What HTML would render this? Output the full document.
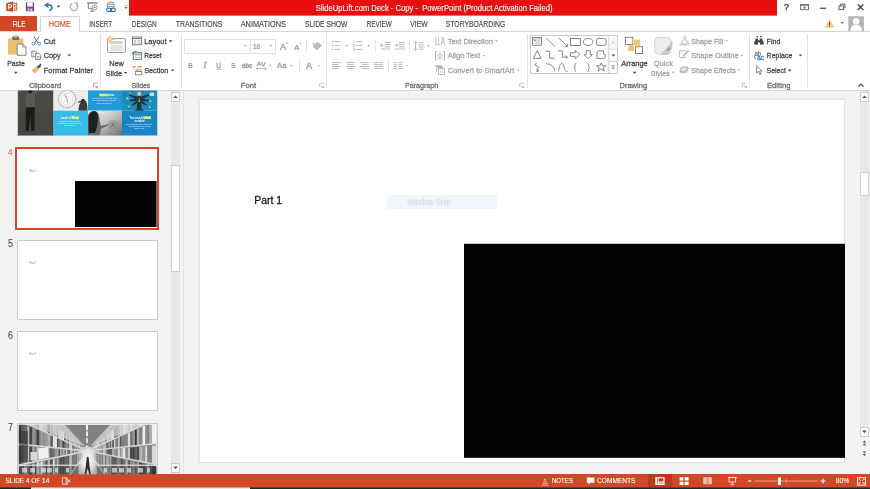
<!DOCTYPE html>
<html lang="en">
<head>
<meta charset="utf-8">
<title>SlideUpLift.com Deck - Copy - PowerPoint</title>
<style>
*{box-sizing:border-box;margin:0;padding:0}
html,body{width:870px;height:489px;overflow:hidden;background:#fff;font-family:"Liberation Sans",sans-serif}
body{position:relative}
.a{position:absolute}
#ov{position:absolute;left:0;top:0;width:870px;height:489px;z-index:5;will-change:transform}
#titlebar{left:129px;top:0;width:648px;height:16px;background:linear-gradient(#e80f0f 0,#e80f0f 15px,#f06a6a 15px,#f06a6a 16px)}
#file{left:0;top:16px;width:37px;height:15px;background:#d24726}
#hometab{left:40px;top:16px;width:40px;height:16px;background:#fff;border:1px solid #d4d4d4;border-bottom:none;z-index:2}
#ribbontop{left:0;top:31px;width:870px;height:1px;background:#d4d4d4}
#ribbonbot{left:0;top:90px;width:870px;height:1px;background:#dadada}
.sep{position:absolute;top:34px;width:1px;height:54px;background:#e2e2e2}
.ssep{position:absolute;width:1px;height:14px;background:#e2e2e2}
#left{left:0;top:91px;width:183px;height:383px;background:#f3f3f3;overflow:hidden}
#divider{left:183px;top:91px;width:1px;height:383px;background:#e4e4e4}
#main{left:184px;top:91px;width:686px;height:383px;background:#f3f3f3}
#slide{left:198px;top:98px;width:647px;height:365px;background:#fff;border:1px solid #e4e4e4;border-left:2px solid #e9e9e9;border-top:2px solid #e9e9e9}
#black{left:464px;top:243px;width:381px;height:215px;background:linear-gradient(#c4c4c4 0,#c4c4c4 1px,#030303 1px,#030303 214px,#2c2c2c 214px)}
#snip{left:387px;top:195px;width:110px;height:14px;background:#f1f5fd}
#status{left:0;top:474px;width:870px;height:13px;background:#d24726}
#viewsel{left:648px;top:474px;width:24px;height:13px;background:#b83b1d}
.tb{position:absolute;left:0;top:487px;height:2px}
.thumb{position:absolute;left:17px;width:141px;height:80px;background:#fff;border:1px solid #cbcbcb}
#t4{left:15px;top:56px;width:144px;height:83px;border:2px solid #d24726;background:#fff;position:absolute}
#t4b{left:75px;top:90px;width:82px;height:46px;background:linear-gradient(to right,#030303 81px,#6a6a6a 81px)}
.sbtrack{position:absolute;background:#e9e9e9}
.sbbtn{position:absolute;background:#fff;border:1px solid #cdcdcd}
.fbox{position:absolute;top:39px;height:15px;border:1px solid #e1e1e1;background:#fff}
#gallery{left:530px;top:35px;width:88px;height:39px;border:1px solid #c8c8c8;background:#fff}

</style>
</head>
<body>
<!-- title bar -->
<div class="a" id="titlebar"></div>
<!-- ribbon tabs -->
<div class="a" id="ribbontop"></div>
<div class="a" id="file"></div>
<div class="a" id="hometab"></div>
<!-- ribbon body -->
<div class="sep" style="left:100px"></div>
<div class="sep" style="left:181px"></div>
<div class="sep" style="left:326px"></div>
<div class="sep" style="left:527px"></div>
<div class="sep" style="left:749px"></div>
<div class="sep" style="left:807px"></div>
<div class="ssep" style="left:306px;top:39px"></div>
<div class="ssep" style="left:299px;top:59px"></div>
<div class="ssep" style="left:375px;top:39px"></div>
<div class="ssep" style="left:409px;top:39px"></div>
<div class="ssep" style="left:388px;top:59px"></div>
<div class="fbox" style="left:184px;width:67px"></div>
<div class="fbox" style="left:250px;width:26px"></div>
<div class="a" id="gallery"></div>
<div class="a" id="ribbonbot"></div>
<!-- left thumbnail pane -->
<div class="a" id="left">
<div class="thumb" id="t3" style="top:-35px;height:80px"></div>
<div id="t4"></div>
<div class="a" id="t4b"></div>
<div class="thumb" style="top:149px"></div>
<div class="thumb" style="top:240px"></div>
<div class="thumb" id="t7" style="top:332px;height:60px"></div>
<div class="sbtrack" style="left:171px;top:0;width:9px;height:383px"></div>
<div class="sbbtn" style="left:171px;top:1px;width:9px;height:10px"></div>
<div class="sbbtn" style="left:171px;top:74px;width:9px;height:107px"></div>
<div class="sbbtn" style="left:171px;top:372px;width:9px;height:10px"></div>
</div>
<div class="a" id="divider"></div>
<!-- editing area -->
<div class="a" id="main"></div>
<div class="a" id="slide"></div>
<div class="a" id="snip"></div>
<div class="a" id="black"></div>
<div class="sbtrack" style="left:860px;top:91px;width:9px;height:383px"></div>
<div class="sbbtn" style="left:860px;top:92px;width:9px;height:10px"></div>
<div class="sbbtn" style="left:860px;top:172px;width:9px;height:24px"></div>
<div class="sbbtn" style="left:860px;top:427px;width:9px;height:10px"></div>
<div class="sbtrack" style="left:860px;top:437px;width:10px;height:37px;background:#f3f3f3"></div>
<!-- status bar -->
<div class="a" id="status"></div>
<div class="a" id="viewsel"></div>
<div class="tb" style="left:0;width:31px;background:linear-gradient(#703928 0,#703928 1px,#0f2b2b 1px)"></div>
<div class="tb" style="left:31px;width:219px;background:linear-gradient(#db9b8b 0,#db9b8b 1px,#e4eef0 1px)"></div>
<div class="tb" style="left:250px;width:620px;background:linear-gradient(#703928 0,#703928 1px,#123032 1px)"></div>

<svg id="ov" width="870" height="489" viewBox="0 0 870 489" font-family='"Liberation Sans", sans-serif'>

<defs>
<clipPath id="t7clip"><rect x="18.600" y="424.800" width="137.900" height="49.400"/></clipPath>
<clipPath id="paneclip"><rect x="0" y="90.600" width="183" height="383.600"/></clipPath>
<linearGradient id="gw" x1="0" y1="0" x2="1" y2="1">
<stop offset="0" stop-color="#f2f2f2"/><stop offset="0.450" stop-color="#c9c9c9"/><stop offset="1" stop-color="#6f6f6f"/>
</linearGradient>
<linearGradient id="gl" x1="0" y1="0" x2="1" y2="0">
<stop offset="0" stop-color="#4e4e4e"/><stop offset="0.200" stop-color="#7a7a7a"/><stop offset="0.600" stop-color="#a2a2a2"/><stop offset="1" stop-color="#c4c4c4"/>
</linearGradient>
<linearGradient id="gr" x1="1" y1="0" x2="0" y2="0">
<stop offset="0" stop-color="#7c7c7c"/><stop offset="0.300" stop-color="#8e8e8e"/><stop offset="0.700" stop-color="#a8a8a8"/><stop offset="1" stop-color="#c8c8c8"/>
</linearGradient>
<radialGradient id="gc" cx="0.500" cy="0.450" r="0.600">
<stop offset="0" stop-color="#fafafa"/><stop offset="0.600" stop-color="#e2e2e2"/><stop offset="1" stop-color="#b0b0b0"/>
</radialGradient>
<pattern id="books" width="3.400" height="10" patternUnits="userSpaceOnUse">
<rect width="1.200" height="10" fill="#000" opacity="0.280"/><rect x="2" width="0.700" height="10" fill="#fff" opacity="0.300"/>
</pattern>
</defs>
<g id="thumb3" clip-path="url(#paneclip)">
<!-- column 1: man at chalkboard -->
<rect x="18.100" y="57" width="35.400" height="78.300" fill="#4a4946"/>
<rect x="18.100" y="112" width="35.400" height="23.300" fill="#46453f" opacity="0.600"/>
<path d="M25.600 96c0.600-2.200 2-3.400 4-3.600l3.600-0.200 4.400-2.400 0.800 1.200-3.600 3.400 0.200 13.200h-8.800z" fill="#595957"/>
<circle cx="30.400" cy="91.600" r="1.900" fill="#23211f"/>
<path d="M25.800 107.200h9l-0.400 23.800h-3.200l-1-18-1.400 18h-3.200z" fill="#1b1a19"/>
<!-- column 2 top: clock sketch -->
<rect x="53.500" y="57" width="34.500" height="53.700" fill="#ececec"/>
<circle cx="67.100" cy="99" r="8.600" fill="#f6f6f6" stroke="#9a9a9a" stroke-width="1.100" stroke-dasharray="1.400 0.900"/>
<circle cx="67.100" cy="99" r="6" fill="none" stroke="#c4c4c4" stroke-width="0.500"/>
<path d="M67.100 99l-2.400-4.600M67.100 99l0.400 4" stroke="#6a6a6a" stroke-width="0.600"/>
<path d="M78.600 110.700c0-5 1-8 3-8.600l-3.400 0.600-0.200-1 4-1.400c0.600-1.400 2.600-1.400 3 0.200 2 1.200 2.400 5 2.600 10.200z" fill="#3a3a3a"/>
<circle cx="82.800" cy="100.200" r="1.400" fill="#2a2a2a"/>
<!-- column 2 bottom: cyan -->
<rect x="53.500" y="110.700" width="34.500" height="24.600" fill="#38bce9"/>
<rect x="71.600" y="116.100" width="7.400" height="2.700" fill="#a5dc2c"/>
<!-- column 3 top: blue -->
<rect x="88" y="57" width="34" height="53.700" fill="#1f9bdb"/>
<rect x="99.300" y="93.700" width="9" height="2.700" fill="#a5dc2c"/>
<rect x="108.300" y="95" width="6.200" height="1.300" fill="#57c43a"/>
<!-- column 3 bottom: woman photo -->
<rect x="88" y="110.700" width="34" height="24.600" fill="url(#gw)"/>
<circle cx="112.600" cy="124.600" r="4" fill="none" stroke="#6a6a6a" stroke-width="0.600" opacity="0.700"/>
<circle cx="112.600" cy="124.600" r="2.200" fill="none" stroke="#555" stroke-width="0.600" opacity="0.800"/>
<circle cx="112.600" cy="124.600" r="0.800" fill="#444"/>
<path d="M88 135.300v-20c1.400-3.600 4.400-5 7.200-4.200 3.400 1 4.200 5 4.600 9.400l1 5.400 6.800-1.600 0.400 1.200-7 3.400-1.200 6.400z" fill="#6b6b6b"/>
<path d="M88.600 133v-16.600c1.200-4 4-5.800 6.600-5 3 1 3.200 5 2.600 10-0.400 4.400-1.400 8.600-3 11.600z" fill="#1e1e1e"/>
<!-- column 4 top: teal illustration -->
<rect x="122" y="57" width="35" height="53.700" fill="#1f8cb4"/>
<path d="M136.600 96.400l2.600-0.800 2.600 0.800 7-2.400 0.600 1.400-6.200 3.400 5.600 1.200-0.200 1.400-6.200-0.400 4.600 3.800-1 1-5-2.800 0.800 6.200 3 1.500h-11.200l3-1.500 0.800-6.200-5 2.800-1-1 4.600-3.800-6.200 0.400-0.200-1.400 5.600-1.200-6.200-3.400 0.600-1.400z" fill="#1c3442"/>
<circle cx="139.200" cy="93.800" r="2.100" fill="#d9c3b0"/>
<path d="M139.200 96.400l-0.700 4.800 0.700 1 0.700-1z" fill="#e8a92e"/>
<rect x="149.600" y="92.800" width="4.400" height="3.200" rx="0.400" fill="#cfeaf5" opacity="0.900"/>
<g fill="#cfeaf5" opacity="0.750"><circle cx="127.400" cy="98.400" r="1.100"/><circle cx="129" cy="106.400" r="1"/><circle cx="150.400" cy="101.200" r="1"/><circle cx="149.600" cy="107" r="1"/><circle cx="130.400" cy="93.200" r="0.800"/></g>
<!-- column 4 bottom: blue -->
<rect x="122" y="110.700" width="35" height="24.600" fill="#1a85c5"/>
<rect x="143.200" y="116.100" width="7.800" height="2.700" fill="#a5dc2c"/>
</g>

<g id="thumb7" clip-path="url(#t7clip)">
<rect x="18.6" y="424.8" width="137.9" height="50.2" fill="#8a8a8a"/>
<path d="M18.6 424.8H156.5L92.6 447.0H82.6z" fill="#919191"/>
<path d="M64 424.8h47l-19 22h-8.800z" fill="#818181"/>
<rect x="86.00" y="424.8" width="2.0" height="5.4" fill="#f6f6f6"/>
<rect x="86.15" y="431.4" width="1.7" height="5" fill="#f6f6f6"/>
<rect x="86.25" y="437.8" width="1.5" height="5.4" fill="#f6f6f6"/>
<rect x="85.50" y="445.6" width="3.0" height="1.2" fill="#f6f6f6"/>
<path d="M82.6 447.0h10l4 9v19h-18v-19z" fill="url(#gc)"/>
<path d="M18.60 396.00L21.54 398.35V421.32L18.60 420.00z" fill="#232323"/>
<path d="M21.54 398.35L23.89 400.22V422.38L21.54 421.32z" fill="#727272"/>
<path d="M23.89 400.22L27.45 403.06V423.98L23.89 422.38z" fill="#8a8a8a"/>
<path d="M27.45 403.06L29.39 404.60V424.85L27.45 423.98z" fill="#8d8d8d"/>
<path d="M29.39 404.60L32.38 406.98V426.19L29.39 424.85z" fill="#dadada"/>
<path d="M32.38 406.98L34.83 408.94V427.29L32.38 426.19z" fill="#bababa"/>
<path d="M34.83 408.94L36.50 410.27V428.04L34.83 427.29z" fill="#939393"/>
<path d="M36.50 410.27L39.06 412.31V429.19L36.50 428.04z" fill="#787878"/>
<path d="M39.06 412.31L40.55 413.50V429.86L39.06 429.19z" fill="#dbdbdb"/>
<path d="M40.55 413.50L42.77 415.27V430.86L40.55 429.86z" fill="#e1e1e1"/>
<path d="M42.77 415.27L44.21 416.41V431.51L42.77 430.86z" fill="#b1b1b1"/>
<path d="M44.21 416.41L45.64 417.55V432.15L44.21 431.51z" fill="#d2d2d2"/>
<path d="M45.64 417.55L47.60 419.12V433.03L45.64 432.15z" fill="#9d9d9d"/>
<path d="M47.60 419.12L50.12 421.13V434.16L47.60 433.03z" fill="#3c3c3c"/>
<path d="M50.12 421.13L51.41 422.15V434.74L50.12 434.16z" fill="#ababab"/>
<path d="M51.41 422.15L52.80 423.26V435.37L51.41 434.74z" fill="#7a7a7a"/>
<path d="M52.80 423.26L54.72 424.79V436.23L52.80 435.37z" fill="#b4b4b4"/>
<path d="M54.72 424.79L56.95 426.56V437.23L54.72 436.23z" fill="#afafaf"/>
<path d="M56.95 426.56L58.57 427.86V437.96L56.95 437.23z" fill="#818181"/>
<path d="M58.57 427.86L59.90 428.92V438.55L58.57 437.96z" fill="#d5d5d5"/>
<path d="M59.90 428.92L61.80 430.44V439.41L59.90 438.55z" fill="#d6d6d6"/>
<path d="M61.80 430.44L62.61 431.08V439.77L61.80 439.41z" fill="#d4d4d4"/>
<path d="M62.61 431.08L64.21 432.36V440.49L62.61 439.77z" fill="#efefef"/>
<path d="M64.21 432.36L65.18 433.13V440.93L64.21 440.49z" fill="#4a4a4a"/>
<path d="M65.18 433.13L65.96 433.75V441.28L65.18 440.93z" fill="#5b5b5b"/>
<path d="M65.96 433.75L66.70 434.34V441.61L65.96 441.28z" fill="#d8d8d8"/>
<path d="M66.70 434.34L67.58 435.04V442.01L66.70 441.61z" fill="#a4a4a4"/>
<path d="M67.58 435.04L68.83 436.04V442.57L67.58 442.01z" fill="#616161"/>
<path d="M68.83 436.04L69.52 436.59V442.88L68.83 442.57z" fill="#e5e5e5"/>
<path d="M69.52 436.59L70.48 437.36V443.31L69.52 442.88z" fill="#e0e0e0"/>
<path d="M70.48 437.36L71.43 438.11V443.74L70.48 443.31z" fill="#a0a0a0"/>
<path d="M71.43 438.11L72.16 438.69V444.06L71.43 443.74z" fill="#cecece"/>
<path d="M72.16 438.69L72.96 439.33V444.42L72.16 444.06z" fill="#a9a9a9"/>
<path d="M72.96 439.33L73.42 439.70V444.63L72.96 444.42z" fill="#e2e2e2"/>
<path d="M73.42 439.70L73.87 440.06V444.83L73.42 444.63z" fill="#d4d4d4"/>
<path d="M73.87 440.06L74.39 440.47V445.06L73.87 444.83z" fill="#d8d8d8"/>
<path d="M74.39 440.47L75.14 441.07V445.40L74.39 445.06z" fill="#a8a8a8"/>
<path d="M75.14 441.07L75.73 441.54V445.67L75.14 445.40z" fill="#e0e0e0"/>
<path d="M75.73 441.54L76.23 441.94V445.89L75.73 445.67z" fill="#e3e3e3"/>
<path d="M76.23 441.94L76.84 442.42V446.16L76.23 445.89z" fill="#a9a9a9"/>
<path d="M76.84 442.42L77.35 442.83V446.40L76.84 446.16z" fill="#a9a9a9"/>
<path d="M77.35 442.83L77.78 443.17V446.59L77.35 446.40z" fill="#d9d9d9"/>
<path d="M77.78 443.17L78.39 443.66V446.86L77.78 446.59z" fill="#7f7f7f"/>
<path d="M78.39 443.66L78.92 444.08V447.10L78.39 446.86z" fill="#d6d6d6"/>
<path d="M78.92 444.08L79.26 444.35V447.25L78.92 447.10z" fill="#b1b1b1"/>
<path d="M79.26 444.35L79.70 444.70V447.45L79.26 447.25z" fill="#d9d9d9"/>
<path d="M79.70 444.70L80.10 445.03V447.63L79.70 447.45z" fill="#c3c3c3"/>
<path d="M80.10 445.03L80.59 445.41V447.85L80.10 447.63z" fill="#8f8f8f"/>
<path d="M80.59 445.41L81.01 445.74V448.04L80.59 447.85z" fill="#9f9f9f"/>
<path d="M81.01 445.74L81.28 445.96V448.16L81.01 448.04z" fill="#d7d7d7"/>
<path d="M81.28 445.96L81.71 446.31V448.36L81.28 448.16z" fill="#acacac"/>
<path d="M81.71 446.31L81.91 446.47V448.45L81.71 448.36z" fill="#d5d5d5"/>
<path d="M81.91 446.47L82.18 446.68V448.56L81.91 448.45z" fill="#e3e3e3"/>
<path d="M82.18 446.68L82.50 446.94V448.71L82.18 448.56z" fill="#d1d1d1"/>
<path d="M82.50 446.94L82.69 447.08V448.79L82.50 448.71z" fill="#dedede"/>
<path d="M18.60 421.50L21.54 422.76V444.30L18.60 444.00z" fill="#383838"/>
<path d="M21.54 422.76L23.89 423.76V444.54L21.54 444.30z" fill="#5d5d5d"/>
<path d="M23.89 423.76L27.45 425.29V444.90L23.89 444.54z" fill="#656565"/>
<path d="M27.45 425.29L29.39 426.11V445.09L27.45 444.90z" fill="#c0c0c0"/>
<path d="M29.39 426.11L32.38 427.39V445.40L29.39 445.09z" fill="#424242"/>
<path d="M32.38 427.39L34.83 428.44V445.65L32.38 445.40z" fill="#939393"/>
<path d="M34.83 428.44L36.50 429.15V445.82L34.83 445.65z" fill="#818181"/>
<path d="M36.50 429.15L39.06 430.25V446.08L36.50 445.82z" fill="#414141"/>
<path d="M39.06 430.25L40.55 430.89V446.23L39.06 446.08z" fill="#7b7b7b"/>
<path d="M40.55 430.89L42.77 431.83V446.45L40.55 446.23z" fill="#a0a0a0"/>
<path d="M42.77 431.83L44.21 432.45V446.60L42.77 446.45z" fill="#919191"/>
<path d="M44.21 432.45L45.64 433.06V446.74L44.21 446.60z" fill="#9a9a9a"/>
<path d="M45.64 433.06L47.60 433.90V446.94L45.64 446.74z" fill="#9d9d9d"/>
<path d="M47.60 433.90L50.12 434.98V447.20L47.60 446.94z" fill="#b2b2b2"/>
<path d="M50.12 434.98L51.41 435.53V447.33L50.12 447.20z" fill="#7c7c7c"/>
<path d="M51.41 435.53L52.80 436.12V447.47L51.41 447.33z" fill="#3b3b3b"/>
<path d="M52.80 436.12L54.72 436.94V447.66L52.80 447.47z" fill="#e9e9e9"/>
<path d="M54.72 436.94L56.95 437.89V447.89L54.72 447.66z" fill="#ebebeb"/>
<path d="M56.95 437.89L58.57 438.59V448.05L56.95 447.89z" fill="#545454"/>
<path d="M58.57 438.59L59.90 439.16V448.19L58.57 448.05z" fill="#7b7b7b"/>
<path d="M59.90 439.16L61.80 439.97V448.38L59.90 448.19z" fill="#9c9c9c"/>
<path d="M61.80 439.97L62.61 440.31V448.46L61.80 448.38z" fill="#777777"/>
<path d="M62.61 440.31L64.21 441.00V448.63L62.61 448.46z" fill="#4a4a4a"/>
<path d="M64.21 441.00L65.18 441.41V448.73L64.21 448.63z" fill="#696969"/>
<path d="M65.18 441.41L65.96 441.75V448.81L65.18 448.73z" fill="#6a6a6a"/>
<path d="M65.96 441.75L66.70 442.07V448.88L65.96 448.81z" fill="#606060"/>
<path d="M66.70 442.07L67.58 442.44V448.97L66.70 448.88z" fill="#ececec"/>
<path d="M67.58 442.44L68.83 442.98V449.10L67.58 448.97z" fill="#545454"/>
<path d="M68.83 442.98L69.52 443.27V449.17L68.83 449.10z" fill="#f0f0f0"/>
<path d="M69.52 443.27L70.48 443.68V449.26L69.52 449.17z" fill="#d7d7d7"/>
<path d="M70.48 443.68L71.43 444.09V449.36L70.48 449.26z" fill="#f1f1f1"/>
<path d="M71.43 444.09L72.16 444.40V449.43L71.43 449.36z" fill="#eeeeee"/>
<path d="M72.16 444.40L72.96 444.74V449.51L72.16 449.43z" fill="#7b7b7b"/>
<path d="M72.96 444.74L73.42 444.94V449.56L72.96 449.51z" fill="#999999"/>
<path d="M73.42 444.94L73.87 445.13V449.61L73.42 449.56z" fill="#666666"/>
<path d="M73.87 445.13L74.39 445.35V449.66L73.87 449.61z" fill="#5d5d5d"/>
<path d="M74.39 445.35L75.14 445.67V449.74L74.39 449.66z" fill="#999999"/>
<path d="M75.14 445.67L75.73 445.92V449.80L75.14 449.74z" fill="#9a9a9a"/>
<path d="M75.73 445.92L76.23 446.14V449.85L75.73 449.80z" fill="#ebebeb"/>
<path d="M76.23 446.14L76.84 446.40V449.91L76.23 449.85z" fill="#727272"/>
<path d="M76.84 446.40L77.35 446.62V449.96L76.84 449.91z" fill="#909090"/>
<path d="M77.35 446.62L77.78 446.80V450.00L77.35 449.96z" fill="#b3b3b3"/>
<path d="M77.78 446.80L78.39 447.06V450.07L77.78 450.00z" fill="#b6b6b6"/>
<path d="M78.39 447.06L78.92 447.29V450.12L78.39 450.07z" fill="#ababab"/>
<path d="M78.92 447.29L79.26 447.43V450.15L78.92 450.12z" fill="#c4c4c4"/>
<path d="M79.26 447.43L79.70 447.62V450.20L79.26 450.15z" fill="#838383"/>
<path d="M79.70 447.62L80.10 447.80V450.24L79.70 450.20z" fill="#888888"/>
<path d="M80.10 447.80L80.59 448.00V450.29L80.10 450.24z" fill="#d8d8d8"/>
<path d="M80.59 448.00L81.01 448.18V450.33L80.59 450.29z" fill="#b4b4b4"/>
<path d="M81.01 448.18L81.28 448.30V450.36L81.01 450.33z" fill="#b4b4b4"/>
<path d="M81.28 448.30L81.71 448.48V450.40L81.28 450.36z" fill="#e1e1e1"/>
<path d="M81.71 448.48L81.91 448.57V450.42L81.71 450.40z" fill="#c2c2c2"/>
<path d="M81.91 448.57L82.18 448.68V450.45L81.91 450.42z" fill="#b2b2b2"/>
<path d="M82.18 448.68L82.50 448.82V450.48L82.18 450.45z" fill="#e6e6e6"/>
<path d="M82.50 448.82L82.69 448.90V450.50L82.50 450.48z" fill="#e5e5e5"/>
<path d="M18.60 446.00L21.54 446.21V464.40L18.60 465.00z" fill="#414141"/>
<path d="M21.54 446.21L23.89 446.38V463.93L21.54 464.40z" fill="#5f5f5f"/>
<path d="M23.89 446.38L27.45 446.64V463.20L23.89 463.93z" fill="#7d7d7d"/>
<path d="M27.45 446.64L29.39 446.78V462.81L27.45 463.20z" fill="#c8c8c8"/>
<path d="M29.39 446.78L32.38 447.00V462.20L29.39 462.81z" fill="#434343"/>
<path d="M32.38 447.00L34.83 447.18V461.71L32.38 462.20z" fill="#a2a2a2"/>
<path d="M34.83 447.18L36.50 447.30V461.37L34.83 461.71z" fill="#646464"/>
<path d="M36.50 447.30L39.06 447.48V460.85L36.50 461.37z" fill="#bdbdbd"/>
<path d="M39.06 447.48L40.55 447.59V460.55L39.06 460.85z" fill="#9d9d9d"/>
<path d="M40.55 447.59L42.77 447.75V460.10L40.55 460.55z" fill="#d7d7d7"/>
<path d="M42.77 447.75L44.21 447.86V459.80L42.77 460.10z" fill="#4b4b4b"/>
<path d="M44.21 447.86L45.64 447.96V459.51L44.21 459.80z" fill="#a4a4a4"/>
<path d="M45.64 447.96L47.60 448.10V459.12L45.64 459.51z" fill="#4b4b4b"/>
<path d="M47.60 448.10L50.12 448.28V458.60L47.60 459.12z" fill="#959595"/>
<path d="M50.12 448.28L51.41 448.38V458.34L50.12 458.60z" fill="#606060"/>
<path d="M51.41 448.38L52.80 448.48V458.06L51.41 458.34z" fill="#616161"/>
<path d="M52.80 448.48L54.72 448.62V457.67L52.80 458.06z" fill="#727272"/>
<path d="M54.72 448.62L56.95 448.78V457.22L54.72 457.67z" fill="#969696"/>
<path d="M56.95 448.78L58.57 448.90V456.89L56.95 457.22z" fill="#adadad"/>
<path d="M58.57 448.90L59.90 448.99V456.62L58.57 456.89z" fill="#414141"/>
<path d="M59.90 448.99L61.80 449.13V456.23L59.90 456.62z" fill="#b5b5b5"/>
<path d="M61.80 449.13L62.61 449.19V456.07L61.80 456.23z" fill="#474747"/>
<path d="M62.61 449.19L64.21 449.31V455.75L62.61 456.07z" fill="#b1b1b1"/>
<path d="M64.21 449.31L65.18 449.38V455.55L64.21 455.75z" fill="#9d9d9d"/>
<path d="M65.18 449.38L65.96 449.43V455.39L65.18 455.55z" fill="#717171"/>
<path d="M65.96 449.43L66.70 449.49V455.24L65.96 455.39z" fill="#e3e3e3"/>
<path d="M66.70 449.49L67.58 449.55V455.06L66.70 455.24z" fill="#c1c1c1"/>
<path d="M67.58 449.55L68.83 449.64V454.81L67.58 455.06z" fill="#616161"/>
<path d="M68.83 449.64L69.52 449.69V454.67L68.83 454.81z" fill="#595959"/>
<path d="M69.52 449.69L70.48 449.76V454.47L69.52 454.67z" fill="#797979"/>
<path d="M70.48 449.76L71.43 449.83V454.28L70.48 454.47z" fill="#cacaca"/>
<path d="M71.43 449.83L72.16 449.88V454.13L71.43 454.28z" fill="#d7d7d7"/>
<path d="M72.16 449.88L72.96 449.94V453.97L72.16 454.13z" fill="#a3a3a3"/>
<path d="M72.96 449.94L73.42 449.97V453.88L72.96 453.97z" fill="#818181"/>
<path d="M73.42 449.97L73.87 450.01V453.79L73.42 453.88z" fill="#6b6b6b"/>
<path d="M73.87 450.01L74.39 450.04V453.68L73.87 453.79z" fill="#828282"/>
<path d="M74.39 450.04L75.14 450.10V453.53L74.39 453.68z" fill="#cfcfcf"/>
<path d="M75.14 450.10L75.73 450.14V453.41L75.14 453.53z" fill="#a0a0a0"/>
<path d="M75.73 450.14L76.23 450.18V453.31L75.73 453.41z" fill="#9e9e9e"/>
<path d="M76.23 450.18L76.84 450.22V453.18L76.23 453.31z" fill="#797979"/>
<path d="M76.84 450.22L77.35 450.26V453.08L76.84 453.18z" fill="#d4d4d4"/>
<path d="M77.35 450.26L77.78 450.29V452.99L77.35 453.08z" fill="#777777"/>
<path d="M77.78 450.29L78.39 450.33V452.87L77.78 452.99z" fill="#d1d1d1"/>
<path d="M78.39 450.33L78.92 450.37V452.76L78.39 452.87z" fill="#d5d5d5"/>
<path d="M78.92 450.37L79.26 450.40V452.69L78.92 452.76z" fill="#8a8a8a"/>
<path d="M79.26 450.40L79.70 450.43V452.60L79.26 452.69z" fill="#cbcbcb"/>
<path d="M79.70 450.43L80.10 450.46V452.52L79.70 452.60z" fill="#e6e6e6"/>
<path d="M80.10 450.46L80.59 450.49V452.42L80.10 452.52z" fill="#b4b4b4"/>
<path d="M80.59 450.49L81.01 450.52V452.34L80.59 452.42z" fill="#dedede"/>
<path d="M81.01 450.52L81.28 450.54V452.28L81.01 452.34z" fill="#bababa"/>
<path d="M81.28 450.54L81.71 450.57V452.19L81.28 452.28z" fill="#a3a3a3"/>
<path d="M81.71 450.57L81.91 450.59V452.15L81.71 452.19z" fill="#cccccc"/>
<path d="M81.91 450.59L82.18 450.61V452.10L81.91 452.15z" fill="#e5e5e5"/>
<path d="M82.18 450.61L82.50 450.63V452.03L82.18 452.10z" fill="#e6e6e6"/>
<path d="M82.50 450.63L82.69 450.64V452.00L82.50 452.03z" fill="#cfcfcf"/>
<path d="M18.60 467.00L21.54 466.32V540.99L18.60 545.00z" fill="#555555"/>
<path d="M21.54 466.32L23.89 465.77V537.80L21.54 540.99z" fill="#525252"/>
<path d="M23.89 465.77L27.45 464.95V532.94L23.89 537.80z" fill="#a4a4a4"/>
<path d="M27.45 464.95L29.39 464.50V530.30L27.45 532.94z" fill="#787878"/>
<path d="M29.39 464.50L32.38 463.80V526.23L29.39 530.30z" fill="#373737"/>
<path d="M32.38 463.80L34.83 463.24V522.89L32.38 526.23z" fill="#b4b4b4"/>
<path d="M34.83 463.24L36.50 462.85V520.62L34.83 522.89z" fill="#454545"/>
<path d="M36.50 462.85L39.06 462.26V517.13L36.50 520.62z" fill="#dfdfdf"/>
<path d="M39.06 462.26L40.55 461.91V515.09L39.06 517.13z" fill="#b1b1b1"/>
<path d="M40.55 461.91L42.77 461.40V512.07L40.55 515.09z" fill="#e4e4e4"/>
<path d="M42.77 461.40L44.21 461.06V510.11L42.77 512.07z" fill="#959595"/>
<path d="M44.21 461.06L45.64 460.73V508.16L44.21 510.11z" fill="#929292"/>
<path d="M45.64 460.73L47.60 460.27V505.49L45.64 508.16z" fill="#4b4b4b"/>
<path d="M47.60 460.27L50.12 459.69V502.06L47.60 505.49z" fill="#b2b2b2"/>
<path d="M50.12 459.69L51.41 459.39V500.30L50.12 502.06z" fill="#484848"/>
<path d="M51.41 459.39L52.80 459.07V498.40L51.41 500.30z" fill="#464646"/>
<path d="M52.80 459.07L54.72 458.62V495.80L52.80 498.40z" fill="#dddddd"/>
<path d="M54.72 458.62L56.95 458.11V492.76L54.72 495.80z" fill="#808080"/>
<path d="M56.95 458.11L58.57 457.73V490.55L56.95 492.76z" fill="#afafaf"/>
<path d="M58.57 457.73L59.90 457.42V488.74L58.57 490.55z" fill="#6a6a6a"/>
<path d="M59.90 457.42L61.80 456.98V486.14L59.90 488.74z" fill="#4c4c4c"/>
<path d="M61.80 456.98L62.61 456.80V485.05L61.80 486.14z" fill="#525252"/>
<path d="M62.61 456.80L64.21 456.42V482.86L62.61 485.05z" fill="#4a4a4a"/>
<path d="M64.21 456.42L65.18 456.20V481.55L64.21 482.86z" fill="#585858"/>
<path d="M65.18 456.20L65.96 456.02V480.47L65.18 481.55z" fill="#5e5e5e"/>
<path d="M65.96 456.02L66.70 455.85V479.47L65.96 480.47z" fill="#4c4c4c"/>
<path d="M66.70 455.85L67.58 455.64V478.27L66.70 479.47z" fill="#777777"/>
<path d="M67.58 455.64L68.83 455.35V476.57L67.58 478.27z" fill="#545454"/>
<path d="M68.83 455.35L69.52 455.19V475.63L68.83 476.57z" fill="#565656"/>
<path d="M69.52 455.19L70.48 454.97V474.32L69.52 475.63z" fill="#e1e1e1"/>
<path d="M70.48 454.97L71.43 454.75V473.02L70.48 474.32z" fill="#b8b8b8"/>
<path d="M71.43 454.75L72.16 454.58V472.04L71.43 473.02z" fill="#c2c2c2"/>
<path d="M72.16 454.58L72.96 454.40V470.95L72.16 472.04z" fill="#767676"/>
<path d="M72.96 454.40L73.42 454.29V470.32L72.96 470.95z" fill="#6a6a6a"/>
<path d="M73.42 454.29L73.87 454.18V469.70L73.42 470.32z" fill="#8b8b8b"/>
<path d="M73.87 454.18L74.39 454.06V469.00L73.87 469.70z" fill="#646464"/>
<path d="M74.39 454.06L75.14 453.89V467.97L74.39 469.00z" fill="#787878"/>
<path d="M75.14 453.89L75.73 453.75V467.17L75.14 467.97z" fill="#8f8f8f"/>
<path d="M75.73 453.75L76.23 453.64V466.49L75.73 467.17z" fill="#6f6f6f"/>
<path d="M76.23 453.64L76.84 453.50V465.66L76.23 466.49z" fill="#6f6f6f"/>
<path d="M76.84 453.50L77.35 453.38V464.96L76.84 465.66z" fill="#7c7c7c"/>
<path d="M77.35 453.38L77.78 453.28V464.38L77.35 464.96z" fill="#efefef"/>
<path d="M77.78 453.28L78.39 453.14V463.55L77.78 464.38z" fill="#939393"/>
<path d="M78.39 453.14L78.92 453.01V462.83L78.39 463.55z" fill="#8a8a8a"/>
<path d="M78.92 453.01L79.26 452.93V462.36L78.92 462.83z" fill="#9b9b9b"/>
<path d="M79.26 452.93L79.70 452.83V461.76L79.26 462.36z" fill="#8e8e8e"/>
<path d="M79.70 452.83L80.10 452.74V461.21L79.70 461.76z" fill="#e2e2e2"/>
<path d="M80.10 452.74L80.59 452.63V460.55L80.10 461.21z" fill="#b3b3b3"/>
<path d="M80.59 452.63L81.01 452.53V459.98L80.59 460.55z" fill="#9a9a9a"/>
<path d="M81.01 452.53L81.28 452.47V459.61L81.01 459.98z" fill="#a5a5a5"/>
<path d="M81.28 452.47L81.71 452.37V459.02L81.28 459.61z" fill="#cfcfcf"/>
<path d="M81.71 452.37L81.91 452.32V458.75L81.71 459.02z" fill="#bebebe"/>
<path d="M81.91 452.32L82.18 452.26V458.39L81.91 458.75z" fill="#b1b1b1"/>
<path d="M82.18 452.26L82.50 452.18V457.94L82.18 458.39z" fill="#b6b6b6"/>
<path d="M82.50 452.18L82.69 452.14V457.69L82.50 457.94z" fill="#cdcdcd"/>
<path d="M18.60 420.00L82.67 448.79" stroke="#e2e2e2" stroke-width="1.300" opacity="0.900"/>
<path d="M18.60 444.00L82.67 450.50" stroke="#e2e2e2" stroke-width="1.300" opacity="0.900"/>
<path d="M18.60 465.00L82.67 452.00" stroke="#e2e2e2" stroke-width="1.300" opacity="0.900"/>
<path d="M18.60 545.00L82.67 457.71" stroke="#e2e2e2" stroke-width="1.300" opacity="0.900"/>
<path d="M156.50 394.00L151.73 397.95V421.22L156.50 419.00z" fill="#3e3e3e"/>
<path d="M151.73 397.95L149.15 400.08V422.42L151.73 421.22z" fill="#d9d9d9"/>
<path d="M149.15 400.08L147.13 401.75V423.35L149.15 422.42z" fill="#9c9c9c"/>
<path d="M147.13 401.75L145.16 403.38V424.27L147.13 423.35z" fill="#383838"/>
<path d="M145.16 403.38L142.29 405.76V425.60L145.16 424.27z" fill="#959595"/>
<path d="M142.29 405.76L139.10 408.39V427.08L142.29 425.60z" fill="#d5d5d5"/>
<path d="M139.10 408.39L136.64 410.43V428.22L139.10 427.08z" fill="#aaaaaa"/>
<path d="M136.64 410.43L134.73 412.01V429.11L136.64 428.22z" fill="#8d8d8d"/>
<path d="M134.73 412.01L132.54 413.82V430.13L134.73 429.11z" fill="#acacac"/>
<path d="M132.54 413.82L130.08 415.86V431.27L132.54 430.13z" fill="#e1e1e1"/>
<path d="M130.08 415.86L127.66 417.86V432.39L130.08 431.27z" fill="#a8a8a8"/>
<path d="M127.66 417.86L125.27 419.84V433.51L127.66 432.39z" fill="#e5e5e5"/>
<path d="M125.27 419.84L122.86 421.83V434.62L125.27 433.51z" fill="#f1f1f1"/>
<path d="M122.86 421.83L120.87 423.48V435.55L122.86 434.62z" fill="#b0b0b0"/>
<path d="M120.87 423.48L119.73 424.42V436.08L120.87 435.55z" fill="#dbdbdb"/>
<path d="M119.73 424.42L117.69 426.11V437.02L119.73 436.08z" fill="#8a8a8a"/>
<path d="M117.69 426.11L116.44 427.14V437.60L117.69 437.02z" fill="#4d4d4d"/>
<path d="M116.44 427.14L114.93 428.39V438.31L116.44 437.60z" fill="#454545"/>
<path d="M114.93 428.39L113.71 429.40V438.88L114.93 438.31z" fill="#4c4c4c"/>
<path d="M113.71 429.40L112.15 430.69V439.60L113.71 438.88z" fill="#f2f2f2"/>
<path d="M112.15 430.69L111.23 431.45V440.02L112.15 439.60z" fill="#f1f1f1"/>
<path d="M111.23 431.45L110.30 432.22V440.46L111.23 440.02z" fill="#b0b0b0"/>
<path d="M110.30 432.22L109.40 432.96V440.87L110.30 440.46z" fill="#d7d7d7"/>
<path d="M109.40 432.96L108.63 433.60V441.23L109.40 440.87z" fill="#a3a3a3"/>
<path d="M108.63 433.60L107.26 434.74V441.87L108.63 441.23z" fill="#d8d8d8"/>
<path d="M107.26 434.74L106.21 435.60V442.36L107.26 441.87z" fill="#b3b3b3"/>
<path d="M106.21 435.60L105.42 436.26V442.72L106.21 442.36z" fill="#9d9d9d"/>
<path d="M105.42 436.26L104.60 436.93V443.10L105.42 442.72z" fill="#5c5c5c"/>
<path d="M104.60 436.93L103.42 437.91V443.65L104.60 443.10z" fill="#e7e7e7"/>
<path d="M103.42 437.91L102.63 438.57V444.02L103.42 443.65z" fill="#c3c3c3"/>
<path d="M102.63 438.57L102.05 439.05V444.29L102.63 444.02z" fill="#b9b9b9"/>
<path d="M102.05 439.05L101.15 439.79V444.71L102.05 444.29z" fill="#cccccc"/>
<path d="M101.15 439.79L100.39 440.42V445.06L101.15 444.71z" fill="#9e9e9e"/>
<path d="M100.39 440.42L99.50 441.16V445.47L100.39 445.06z" fill="#afafaf"/>
<path d="M99.50 441.16L99.10 441.49V445.66L99.50 445.47z" fill="#c1c1c1"/>
<path d="M99.10 441.49L98.54 441.95V445.92L99.10 445.66z" fill="#e4e4e4"/>
<path d="M98.54 441.95L97.85 442.52V446.24L98.54 445.92z" fill="#ebebeb"/>
<path d="M97.85 442.52L97.20 443.06V446.54L97.85 446.24z" fill="#e6e6e6"/>
<path d="M97.20 443.06L96.56 443.58V446.84L97.20 446.54z" fill="#eeeeee"/>
<path d="M96.56 443.58L96.29 443.81V446.96L96.56 446.84z" fill="#e7e7e7"/>
<path d="M96.29 443.81L95.93 444.11V447.13L96.29 446.96z" fill="#b9b9b9"/>
<path d="M95.93 444.11L95.64 444.35V447.26L95.93 447.13z" fill="#e5e5e5"/>
<path d="M95.64 444.35L95.35 444.59V447.40L95.64 447.26z" fill="#e4e4e4"/>
<path d="M95.35 444.59L94.81 445.03V447.65L95.35 447.40z" fill="#dbdbdb"/>
<path d="M94.81 445.03L94.43 445.35V447.83L94.81 447.65z" fill="#e7e7e7"/>
<path d="M94.43 445.35L93.97 445.73V448.04L94.43 447.83z" fill="#e5e5e5"/>
<path d="M93.97 445.73L93.69 445.96V448.17L93.97 448.04z" fill="#e3e3e3"/>
<path d="M93.69 445.96L93.29 446.29V448.36L93.69 448.17z" fill="#cacaca"/>
<path d="M93.29 446.29L93.02 446.51V448.48L93.29 448.36z" fill="#e6e6e6"/>
<path d="M93.02 446.51L92.80 446.69V448.58L93.02 448.48z" fill="#d0d0d0"/>
<path d="M92.80 446.69L92.49 446.96V448.73L92.80 448.58z" fill="#d9d9d9"/>
<path d="M156.50 420.50L151.73 422.61V444.02L156.50 443.50z" fill="#f4f4f4"/>
<path d="M151.73 422.61L149.15 423.76V444.30L151.73 444.02z" fill="#afafaf"/>
<path d="M149.15 423.76L147.13 424.65V444.52L149.15 444.30z" fill="#848484"/>
<path d="M147.13 424.65L145.16 425.52V444.73L147.13 444.52z" fill="#909090"/>
<path d="M145.16 425.52L142.29 426.79V445.05L145.16 444.73z" fill="#eeeeee"/>
<path d="M142.29 426.79L139.10 428.20V445.39L142.29 445.05z" fill="#848484"/>
<path d="M139.10 428.20L136.64 429.29V445.66L139.10 445.39z" fill="#ababab"/>
<path d="M136.64 429.29L134.73 430.14V445.87L136.64 445.66z" fill="#363636"/>
<path d="M134.73 430.14L132.54 431.11V446.11L134.73 445.87z" fill="#9a9a9a"/>
<path d="M132.54 431.11L130.08 432.20V446.38L132.54 446.11z" fill="#777777"/>
<path d="M130.08 432.20L127.66 433.27V446.64L130.08 446.38z" fill="#dedede"/>
<path d="M127.66 433.27L125.27 434.33V446.90L127.66 446.64z" fill="#838383"/>
<path d="M125.27 434.33L122.86 435.39V447.16L125.27 446.90z" fill="#828282"/>
<path d="M122.86 435.39L120.87 436.27V447.38L122.86 447.16z" fill="#7b7b7b"/>
<path d="M120.87 436.27L119.73 436.78V447.50L120.87 447.38z" fill="#4b4b4b"/>
<path d="M119.73 436.78L117.69 437.68V447.72L119.73 447.50z" fill="#c4c4c4"/>
<path d="M117.69 437.68L116.44 438.23V447.86L117.69 447.72z" fill="#6f6f6f"/>
<path d="M116.44 438.23L114.93 438.90V448.03L116.44 447.86z" fill="#959595"/>
<path d="M114.93 438.90L113.71 439.44V448.16L114.93 448.03z" fill="#d6d6d6"/>
<path d="M113.71 439.44L112.15 440.13V448.33L113.71 448.16z" fill="#4e4e4e"/>
<path d="M112.15 440.13L111.23 440.54V448.43L112.15 448.33z" fill="#e5e5e5"/>
<path d="M111.23 440.54L110.30 440.95V448.53L111.23 448.43z" fill="#484848"/>
<path d="M110.30 440.95L109.40 441.35V448.63L110.30 448.53z" fill="#aaaaaa"/>
<path d="M109.40 441.35L108.63 441.69V448.71L109.40 448.63z" fill="#888888"/>
<path d="M108.63 441.69L107.26 442.30V448.86L108.63 448.71z" fill="#7b7b7b"/>
<path d="M107.26 442.30L106.21 442.76V448.97L107.26 448.86z" fill="#5f5f5f"/>
<path d="M106.21 442.76L105.42 443.11V449.06L106.21 448.97z" fill="#a8a8a8"/>
<path d="M105.42 443.11L104.60 443.47V449.15L105.42 449.06z" fill="#e0e0e0"/>
<path d="M104.60 443.47L103.42 444.00V449.28L104.60 449.15z" fill="#c6c6c6"/>
<path d="M103.42 444.00L102.63 444.35V449.36L103.42 449.28z" fill="#c3c3c3"/>
<path d="M102.63 444.35L102.05 444.61V449.43L102.63 449.36z" fill="#aaaaaa"/>
<path d="M102.05 444.61L101.15 445.00V449.53L102.05 449.43z" fill="#9b9b9b"/>
<path d="M101.15 445.00L100.39 445.34V449.61L101.15 449.53z" fill="#dfdfdf"/>
<path d="M100.39 445.34L99.50 445.73V449.70L100.39 449.61z" fill="#9d9d9d"/>
<path d="M99.50 445.73L99.10 445.91V449.75L99.50 449.70z" fill="#cacaca"/>
<path d="M99.10 445.91L98.54 446.16V449.81L99.10 449.75z" fill="#a8a8a8"/>
<path d="M98.54 446.16L97.85 446.46V449.88L98.54 449.81z" fill="#c3c3c3"/>
<path d="M97.85 446.46L97.20 446.75V449.95L97.85 449.88z" fill="#dfdfdf"/>
<path d="M97.20 446.75L96.56 447.03V450.02L97.20 449.95z" fill="#cbcbcb"/>
<path d="M96.56 447.03L96.29 447.15V450.05L96.56 450.02z" fill="#cecece"/>
<path d="M96.29 447.15L95.93 447.31V450.09L96.29 450.05z" fill="#eeeeee"/>
<path d="M95.93 447.31L95.64 447.44V450.12L95.93 450.09z" fill="#838383"/>
<path d="M95.64 447.44L95.35 447.57V450.16L95.64 450.12z" fill="#eaeaea"/>
<path d="M95.35 447.57L94.81 447.81V450.21L95.35 450.16z" fill="#cccccc"/>
<path d="M94.81 447.81L94.43 447.98V450.26L94.81 450.21z" fill="#aeaeae"/>
<path d="M94.43 447.98L93.97 448.18V450.31L94.43 450.26z" fill="#dadada"/>
<path d="M93.97 448.18L93.69 448.31V450.34L93.97 450.31z" fill="#b8b8b8"/>
<path d="M93.69 448.31L93.29 448.48V450.38L93.69 450.34z" fill="#e2e2e2"/>
<path d="M93.29 448.48L93.02 448.60V450.41L93.29 450.38z" fill="#e0e0e0"/>
<path d="M93.02 448.60L92.80 448.70V450.43L93.02 450.41z" fill="#e0e0e0"/>
<path d="M92.80 448.70L92.49 448.84V450.47L92.80 450.43z" fill="#c1c1c1"/>
<path d="M156.50 445.50L151.73 445.88V463.56L156.50 464.50z" fill="#dadada"/>
<path d="M151.73 445.88L149.15 446.09V463.06L151.73 463.56z" fill="#818181"/>
<path d="M149.15 446.09L147.13 446.25V462.66L149.15 463.06z" fill="#868686"/>
<path d="M147.13 446.25L145.16 446.41V462.28L147.13 462.66z" fill="#e0e0e0"/>
<path d="M145.16 446.41L142.29 446.63V461.72L145.16 462.28z" fill="#949494"/>
<path d="M142.29 446.63L139.10 446.89V461.09L142.29 461.72z" fill="#b4b4b4"/>
<path d="M139.10 446.89L136.64 447.09V460.61L139.10 461.09z" fill="#494949"/>
<path d="M136.64 447.09L134.73 447.24V460.23L136.64 460.61z" fill="#626262"/>
<path d="M134.73 447.24L132.54 447.41V459.81L134.73 460.23z" fill="#404040"/>
<path d="M132.54 447.41L130.08 447.61V459.32L132.54 459.81z" fill="#414141"/>
<path d="M130.08 447.61L127.66 447.80V458.85L130.08 459.32z" fill="#c4c4c4"/>
<path d="M127.66 447.80L125.27 447.99V458.38L127.66 458.85z" fill="#858585"/>
<path d="M125.27 447.99L122.86 448.19V457.91L125.27 458.38z" fill="#ededed"/>
<path d="M122.86 448.19L120.87 448.34V457.52L122.86 457.91z" fill="#b5b5b5"/>
<path d="M120.87 448.34L119.73 448.44V457.30L120.87 457.52z" fill="#909090"/>
<path d="M119.73 448.44L117.69 448.60V456.90L119.73 457.30z" fill="#dadada"/>
<path d="M117.69 448.60L116.44 448.70V456.65L117.69 456.90z" fill="#878787"/>
<path d="M116.44 448.70L114.93 448.82V456.35L116.44 456.65z" fill="#949494"/>
<path d="M114.93 448.82L113.71 448.92V456.12L114.93 456.35z" fill="#9e9e9e"/>
<path d="M113.71 448.92L112.15 449.04V455.81L113.71 456.12z" fill="#bebebe"/>
<path d="M112.15 449.04L111.23 449.11V455.63L112.15 455.81z" fill="#585858"/>
<path d="M111.23 449.11L110.30 449.19V455.45L111.23 455.63z" fill="#4f4f4f"/>
<path d="M110.30 449.19L109.40 449.26V455.27L110.30 455.45z" fill="#505050"/>
<path d="M109.40 449.26L108.63 449.32V455.12L109.40 455.27z" fill="#4e4e4e"/>
<path d="M108.63 449.32L107.26 449.43V454.85L108.63 455.12z" fill="#4b4b4b"/>
<path d="M107.26 449.43L106.21 449.51V454.65L107.26 454.85z" fill="#959595"/>
<path d="M106.21 449.51L105.42 449.58V454.49L106.21 454.65z" fill="#646464"/>
<path d="M105.42 449.58L104.60 449.64V454.33L105.42 454.49z" fill="#e1e1e1"/>
<path d="M104.60 449.64L103.42 449.74V454.10L104.60 454.33z" fill="#d9d9d9"/>
<path d="M103.42 449.74L102.63 449.80V453.94L103.42 454.10z" fill="#dcdcdc"/>
<path d="M102.63 449.80L102.05 449.85V453.83L102.63 453.94z" fill="#606060"/>
<path d="M102.05 449.85L101.15 449.92V453.65L102.05 453.83z" fill="#bfbfbf"/>
<path d="M101.15 449.92L100.39 449.98V453.51L101.15 453.65z" fill="#6a6a6a"/>
<path d="M100.39 449.98L99.50 450.05V453.33L100.39 453.51z" fill="#c5c5c5"/>
<path d="M99.50 450.05L99.10 450.08V453.25L99.50 453.33z" fill="#b8b8b8"/>
<path d="M99.10 450.08L98.54 450.13V453.14L99.10 453.25z" fill="#9d9d9d"/>
<path d="M98.54 450.13L97.85 450.18V453.01L98.54 453.14z" fill="#cbcbcb"/>
<path d="M97.85 450.18L97.20 450.23V452.88L97.85 453.01z" fill="#c5c5c5"/>
<path d="M97.20 450.23L96.56 450.28V452.76L97.20 452.88z" fill="#e4e4e4"/>
<path d="M96.56 450.28L96.29 450.31V452.70L96.56 452.76z" fill="#cfcfcf"/>
<path d="M96.29 450.31L95.93 450.34V452.63L96.29 452.70z" fill="#ababab"/>
<path d="M95.93 450.34L95.64 450.36V452.58L95.93 452.63z" fill="#c6c6c6"/>
<path d="M95.64 450.36L95.35 450.38V452.52L95.64 452.58z" fill="#8f8f8f"/>
<path d="M95.35 450.38L94.81 450.42V452.41L95.35 452.52z" fill="#bbbbbb"/>
<path d="M94.81 450.42L94.43 450.45V452.34L94.81 452.41z" fill="#aaaaaa"/>
<path d="M94.43 450.45L93.97 450.49V452.25L94.43 452.34z" fill="#d6d6d6"/>
<path d="M93.97 450.49L93.69 450.51V452.19L93.97 452.25z" fill="#b8b8b8"/>
<path d="M93.69 450.51L93.29 450.55V452.12L93.69 452.19z" fill="#d7d7d7"/>
<path d="M93.29 450.55L93.02 450.57V452.06L93.29 452.12z" fill="#dedede"/>
<path d="M93.02 450.57L92.80 450.58V452.02L93.02 452.06z" fill="#e3e3e3"/>
<path d="M92.80 450.58L92.49 450.61V451.96L92.80 452.02z" fill="#ededed"/>
<path d="M156.50 466.50L151.73 465.43V538.49L156.50 545.00z" fill="#353535"/>
<path d="M151.73 465.43L149.15 464.85V534.97L151.73 538.49z" fill="#4d4d4d"/>
<path d="M149.15 464.85L147.13 464.39V532.22L149.15 534.97z" fill="#9f9f9f"/>
<path d="M147.13 464.39L145.16 463.95V529.53L147.13 532.22z" fill="#676767"/>
<path d="M145.16 463.95L142.29 463.30V525.61L145.16 529.53z" fill="#474747"/>
<path d="M142.29 463.30L139.10 462.59V521.26L142.29 525.61z" fill="#464646"/>
<path d="M139.10 462.59L136.64 462.03V517.91L139.10 521.26z" fill="#989898"/>
<path d="M136.64 462.03L134.73 461.60V515.30L136.64 517.91z" fill="#696969"/>
<path d="M134.73 461.60L132.54 461.11V512.31L134.73 515.30z" fill="#9a9a9a"/>
<path d="M132.54 461.11L130.08 460.56V508.96L132.54 512.31z" fill="#868686"/>
<path d="M130.08 460.56L127.66 460.01V505.66L130.08 508.96z" fill="#5f5f5f"/>
<path d="M127.66 460.01L125.27 459.47V502.39L127.66 505.66z" fill="#b3b3b3"/>
<path d="M125.27 459.47L122.86 458.93V499.11L125.27 502.39z" fill="#707070"/>
<path d="M122.86 458.93L120.87 458.48V496.39L122.86 499.11z" fill="#545454"/>
<path d="M120.87 458.48L119.73 458.23V494.84L120.87 496.39z" fill="#717171"/>
<path d="M119.73 458.23L117.69 457.77V492.05L119.73 494.84z" fill="#868686"/>
<path d="M117.69 457.77L116.44 457.49V490.35L117.69 492.05z" fill="#7f7f7f"/>
<path d="M116.44 457.49L114.93 457.15V488.28L116.44 490.35z" fill="#5e5e5e"/>
<path d="M114.93 457.15L113.71 456.87V486.62L114.93 488.28z" fill="#555555"/>
<path d="M113.71 456.87L112.15 456.52V484.50L113.71 486.62z" fill="#595959"/>
<path d="M112.15 456.52L111.23 456.32V483.24L112.15 484.50z" fill="#454545"/>
<path d="M111.23 456.32L110.30 456.11V481.97L111.23 483.24z" fill="#f0f0f0"/>
<path d="M110.30 456.11L109.40 455.91V480.75L110.30 481.97z" fill="#5c5c5c"/>
<path d="M109.40 455.91L108.63 455.73V479.69L109.40 480.75z" fill="#b1b1b1"/>
<path d="M108.63 455.73L107.26 455.42V477.82L108.63 479.69z" fill="#b2b2b2"/>
<path d="M107.26 455.42L106.21 455.19V476.39L107.26 477.82z" fill="#a9a9a9"/>
<path d="M106.21 455.19L105.42 455.01V475.31L106.21 476.39z" fill="#919191"/>
<path d="M105.42 455.01L104.60 454.83V474.20L105.42 475.31z" fill="#515151"/>
<path d="M104.60 454.83L103.42 454.56V472.59L104.60 474.20z" fill="#e4e4e4"/>
<path d="M103.42 454.56L102.63 454.38V471.50L103.42 472.59z" fill="#9b9b9b"/>
<path d="M102.63 454.38L102.05 454.25V470.71L102.63 471.50z" fill="#6e6e6e"/>
<path d="M102.05 454.25L101.15 454.05V469.48L102.05 470.71z" fill="#a3a3a3"/>
<path d="M101.15 454.05L100.39 453.88V468.44L101.15 469.48z" fill="#949494"/>
<path d="M100.39 453.88L99.50 453.68V467.23L100.39 468.44z" fill="#7c7c7c"/>
<path d="M99.50 453.68L99.10 453.59V466.69L99.50 467.23z" fill="#7c7c7c"/>
<path d="M99.10 453.59L98.54 453.46V465.92L99.10 466.69z" fill="#c9c9c9"/>
<path d="M98.54 453.46L97.85 453.31V464.99L98.54 465.92z" fill="#a8a8a8"/>
<path d="M97.85 453.31L97.20 453.16V464.10L97.85 464.99z" fill="#858585"/>
<path d="M97.20 453.16L96.56 453.02V463.23L97.20 464.10z" fill="#a0a0a0"/>
<path d="M96.56 453.02L96.29 452.95V462.85L96.56 463.23z" fill="#aeaeae"/>
<path d="M96.29 452.95L95.93 452.87V462.36L96.29 462.85z" fill="#9d9d9d"/>
<path d="M95.93 452.87L95.64 452.81V461.97L95.93 462.36z" fill="#b7b7b7"/>
<path d="M95.64 452.81L95.35 452.74V461.57L95.64 461.97z" fill="#cacaca"/>
<path d="M95.35 452.74L94.81 452.62V460.84L95.35 461.57z" fill="#a9a9a9"/>
<path d="M94.81 452.62L94.43 452.54V460.32L94.81 460.84z" fill="#c4c4c4"/>
<path d="M94.43 452.54L93.97 452.43V459.69L94.43 460.32z" fill="#b5b5b5"/>
<path d="M93.97 452.43L93.69 452.37V459.30L93.97 459.69z" fill="#ebebeb"/>
<path d="M93.69 452.37L93.29 452.28V458.77L93.69 459.30z" fill="#e5e5e5"/>
<path d="M93.29 452.28L93.02 452.22V458.40L93.29 458.77z" fill="#b7b7b7"/>
<path d="M93.02 452.22L92.80 452.17V458.10L93.02 458.40z" fill="#d4d4d4"/>
<path d="M92.80 452.17L92.49 452.10V457.67L92.80 458.10z" fill="#d5d5d5"/>
<path d="M156.50 419.00L92.52 448.71" stroke="#e2e2e2" stroke-width="1.300" opacity="0.900"/>
<path d="M156.50 443.50L92.52 450.46" stroke="#e2e2e2" stroke-width="1.300" opacity="0.900"/>
<path d="M156.50 464.50L92.52 451.96" stroke="#e2e2e2" stroke-width="1.300" opacity="0.900"/>
<path d="M156.50 545.00L92.52 457.71" stroke="#e2e2e2" stroke-width="1.300" opacity="0.900"/>
<path d="M29 424.8h36l20 21.500z" fill="#d4d4d4" opacity="0.750"/>
<path d="M146 424.8h-36l-20 21.500z" fill="#dcdcdc" opacity="0.700"/>
<path d="M38.500 448.500l9.800-1.600 0.500 11-10 1.600z" fill="#f0f0f0"/>
<path d="M30.500 452h6.500v8.500h-6.500z" fill="#d8d8d8"/>
<rect x="18.6" y="431" width="9.500" height="31" fill="#2c2c2c" opacity="0.550"/>
<rect x="18.6" y="464.600" width="59.500" height="1.500" fill="#dadada" opacity="0.900"/>
<rect x="97.200" y="464.600" width="59.300" height="1.500" fill="#dadada" opacity="0.900"/>
<rect x="18.6" y="466.100" width="59.500" height="9" fill="#3c3c3c" opacity="0.350"/>
<rect x="97.200" y="466.100" width="59.300" height="9" fill="#3c3c3c" opacity="0.350"/>
<rect x="22" y="468" width="5" height="4.500" fill="#e8e8e8" opacity="0.700"/>
<rect x="30" y="468" width="5" height="4.500" fill="#e8e8e8" opacity="0.700"/>
<rect x="41" y="468" width="5" height="4.500" fill="#e8e8e8" opacity="0.700"/>
<rect x="47" y="468" width="5" height="4.500" fill="#e8e8e8" opacity="0.700"/>
<rect x="55" y="468" width="3" height="4.500" fill="#e8e8e8" opacity="0.700"/>
<rect x="66" y="468" width="3" height="4.500" fill="#e8e8e8" opacity="0.700"/>
<rect x="104" y="468" width="3" height="4.500" fill="#e8e8e8" opacity="0.700"/>
<rect x="112" y="468" width="5" height="4.500" fill="#e8e8e8" opacity="0.700"/>
<rect x="119" y="468" width="5" height="4.500" fill="#e8e8e8" opacity="0.700"/>
<rect x="127" y="468" width="4" height="4.500" fill="#e8e8e8" opacity="0.700"/>
<rect x="138" y="468" width="5" height="4.500" fill="#e8e8e8" opacity="0.700"/>
<rect x="147" y="468" width="3" height="4.500" fill="#e8e8e8" opacity="0.700"/>
<path d="M86.500 459.400c0.200-1.500 2.200-1.500 2.400 0l0.600 6.200 1.300 8.600h-1.500l-1.600-5.800-1.600 5.800h-1.500l1.300-8.600z" fill="#2e2e2e"/>
<circle cx="87.700" cy="457.900" r="1.100" fill="#333"/>
</g>

<g id="qat">
<!-- powerpoint logo -->
<rect x="12.4" y="3.2" width="4.3" height="6.9" fill="#fff" stroke="#d24726" stroke-width="0.9"/>
<path d="M13.6 5.2h2.2M13.6 6.7h2.2M13.6 8.2h2.2" stroke="#d24726" stroke-width="0.8"/>
<path d="M6.2 2.9L13 1.7V11.8L6.2 10.8Z" fill="#d24726"/>
<path d="M8.7 9.4V4.5h1.4a1.45 1.45 0 0 1 0 2.9H8.9" fill="none" stroke="#fff" stroke-width="1.1"/>
<!-- save -->
<rect x="25.8" y="2.5" width="8.3" height="8.8" rx="0.6" fill="#7d3f9e"/>
<rect x="27.2" y="2.5" width="5.5" height="4.1" fill="#fff"/>
<rect x="27.6" y="8.5" width="4.8" height="2.8" fill="#c9c9c9"/>
<rect x="29.3" y="9.2" width="1" height="1.6" fill="#7d3f9e"/>
<!-- undo -->
<path d="M47.5 4.9C52 4.2 53.6 8 50 10.4" fill="none" stroke="#2f7fc4" stroke-width="1.7" stroke-linecap="round"/>
<path d="M43.8 5.2L48.4 2.3V8.1Z" fill="#2f7fc4"/>
<path d="M56.7 5.6h3.6l-1.8 2.100z" fill="#4a4a4a"/>
<!-- redo (disabled) -->
<path d="M72.2 3.6A3.7 3.7 0 1 0 76.4 4.2" fill="none" stroke="#adadad" stroke-width="1.2"/>
<path d="M74.2 2.8h3v3" fill="none" stroke="#adadad" stroke-width="1.2"/>
<!-- start from beginning -->
<path d="M87 3h10.8" stroke="#666" stroke-width="1.1"/>
<path d="M88.3 3.4v5.2h4" fill="none" stroke="#7a7a7a" stroke-width="0.9"/>
<path d="M92 8.8v2.3M90.2 11.3h4.2" stroke="#7a7a7a" stroke-width="0.9"/>
<circle cx="94.6" cy="7.5" r="2.5" fill="#fff" stroke="#8a8a8a" stroke-width="0.8"/>
<path d="M93.8 6.2l2.2 1.3-2.2 1.3z" fill="#2ea84a"/>
<!-- globe link -->
<circle cx="110.7" cy="5.6" r="3.6" fill="#fff" stroke="#8a8a8a" stroke-width="1"/>
<path d="M107.2 4.3h7M107.2 6.6h7" stroke="#8a8a8a" stroke-width="0.9"/>
<rect x="106.6" y="8.3" width="5" height="3.1" rx="1.5" fill="#fff" stroke="#1f74b4" stroke-width="1.1"/>
<rect x="110.4" y="8.3" width="5" height="3.1" rx="1.5" fill="none" stroke="#1f74b4" stroke-width="1.1"/>
<!-- customize -->
<path d="M124.6 5.4h2.6" stroke="#aaa" stroke-width="0.8"/>
<path d="M124.3 7h3.2l-1.6 1.9z" fill="#666"/>
</g>
<g id="winctl">
<rect x="800.6" y="4.5" width="8" height="5.2" fill="none" stroke="#666" stroke-width="0.9"/>
<path d="M800.6 5.6h8" stroke="#666" stroke-width="0.8"/>
<path d="M804.6 6.4v2.6M803.3 7.7h2.6" stroke="#666" stroke-width="0.8"/>
<path d="M820 8.3h6.2" stroke="#555" stroke-width="1.3"/>
<rect x="839" y="6" width="4.6" height="3.6" fill="none" stroke="#555" stroke-width="0.9"/>
<path d="M840.4 6V4.2h4.6v3.6h-1.4" fill="none" stroke="#555" stroke-width="0.9"/>
<path d="M857.6 4.5l5.8 5.4M863.4 4.5l-5.8 5.4" stroke="#444" stroke-width="1.3"/>
<!-- warning + account -->
<path d="M829.5 19.2l4.9 8.3h-9.8z" fill="#f3c775"/>
<path d="M829.5 22v3.2M829.5 25.9v0.9" stroke="#8a3b2a" stroke-width="1"/>
<path d="M840.8 22h3.2l-1.6 1.9z" fill="#666"/>
<rect x="848.3" y="16.3" width="15.6" height="14.7" fill="#b4b4b4"/>
<circle cx="856.1" cy="21.3" r="3.3" fill="#fff"/>
<path d="M850.3 31c0-4.5 2.6-6.3 5.8-6.3s5.8 1.8 5.8 6.3z" fill="#fff"/>
<!-- collapse ribbon -->
<path d="M858.2 86.8l2.7-2.8 2.7 2.8" fill="none" stroke="#555" stroke-width="1.1"/>
</g>

<g id="clipgrp">
<!-- paste -->
<rect x="8" y="38.4" width="15.4" height="16.4" rx="1" fill="#ecc172"/>
<rect x="12.2" y="36.6" width="7" height="3.4" rx="0.8" fill="#6f6f6f"/>
<rect x="14.2" y="35.9" width="3" height="1.8" rx="0.8" fill="#fff" stroke="#6f6f6f" stroke-width="0.7"/>
<path d="M17.2 44h5.6l3.1 3.1v8.2h-8.7z" fill="#fff" stroke="#6a6a6a" stroke-width="0.8"/>
<path d="M22.8 44v3.1h3.1" fill="none" stroke="#6a6a6a" stroke-width="0.7"/>
<path d="M14 71.8h3.6l-1.8 2.100z" fill="#4a4a4a"/>
<!-- cut -->
<path d="M33.6 36.5l4.6 6.4M39.2 36.5l-4.6 6.4" stroke="#555" stroke-width="0.9"/>
<circle cx="33.5" cy="43.6" r="1.5" fill="#fff" stroke="#2f7fc4" stroke-width="0.8"/>
<circle cx="39.2" cy="43.6" r="1.5" fill="#fff" stroke="#2f7fc4" stroke-width="0.8"/>
<!-- copy -->
<path d="M31.8 51.2h3.6l1.4 1.4v4.2h-5z" fill="#fff" stroke="#666" stroke-width="0.8"/>
<path d="M35.6 53.6h3.4l1.6 1.6v4.2h-5z" fill="#fff" stroke="#666" stroke-width="0.8"/>
<path d="M32.9 53.2h1.6M32.9 54.6h1.2" stroke="#4f90cc" stroke-width="0.6"/>
<path d="M36.8 56.4h2.6M36.8 57.8h2.6" stroke="#4f90cc" stroke-width="0.7"/>
<path d="M67.4 54.4h3.6l-1.8 2.100z" fill="#4a4a4a"/>
<!-- format painter -->
<path d="M31.6 70l5-3.2 2.2 3-4.2 3.8z" fill="#e9bb69"/>
<path d="M36.6 66.6l3.4-2.2 1.2 1.8-2.6 2.6z" fill="#555"/>
<path d="M39.4 65.4l1.8-1.2" stroke="#555" stroke-width="1.4"/>
<!-- dialog launcher -->
<path d="M93.4 87.2v-3.8h3.8" fill="none" stroke="#8a8a8a" stroke-width="0.7"/>
<path d="M95 85.2l2.4 2.4M97.6 85.8v1.9h-1.9" fill="none" stroke="#777" stroke-width="0.7"/>
</g>
<g id="slidesgrp">
<!-- new slide -->
<rect x="107.6" y="38.6" width="17.8" height="13.8" rx="1" fill="#fff" stroke="#8c8c8c" stroke-width="0.9"/>
<rect x="110.4" y="41" width="12.4" height="2.9" fill="#d2d2d2"/>
<path d="M110.4 46h12.4M110.4 48h12.4M110.4 50h12.4" stroke="#b5b5b5" stroke-width="0.7"/>
<circle cx="110.1" cy="39.5" r="2.6" fill="#fff"/>
<path d="M110.1 35.7v7.6M106.3 39.5h7.6M107.4 36.8l5.4 5.4M112.8 36.8l-5.4 5.4" stroke="#eea632" stroke-width="0.8"/>
<circle cx="110.1" cy="39.5" r="1.3" fill="#fff" stroke="#eea632" stroke-width="0.6"/>
<path d="M123.8 71.9h3.6l-1.8 2.100z" fill="#4a4a4a"/>
<!-- layout -->
<rect x="132.5" y="37" width="9.2" height="7.8" fill="#fff" stroke="#6f6f6f" stroke-width="0.9"/>
<path d="M133 38.6h8.2" stroke="#6f6f6f" stroke-width="1"/>
<rect x="133.8" y="40.2" width="2.6" height="3.4" fill="#c4c4c4"/>
<path d="M137.6 40.7h3M137.6 42h3M137.6 43.3h3" stroke="#8a8a8a" stroke-width="0.6"/>
<path d="M168.8 40.3h3.6l-1.8 2.100z" fill="#4a4a4a"/>
<!-- reset -->
<rect x="133.3" y="52.6" width="8.4" height="6.8" fill="#fff" stroke="#6f6f6f" stroke-width="0.9"/>
<path d="M133.6 54.2h7.8" stroke="#6f6f6f" stroke-width="0.9"/>
<path d="M135 55.8h2M138 55.8h2.6M135 57.4h2M138 57.4h2.6" stroke="#9a9a9a" stroke-width="0.6"/>
<path d="M132.5 53.8c0.4-2.4 2.6-3 4.2-2.2" fill="none" stroke="#2f7fc4" stroke-width="0.9"/>
<path d="M131.6 52.6l1 2 1.6-1.4z" fill="#2f7fc4"/>
<!-- section -->
<path d="M132.6 66.8h3M137.4 66.8h4.4" stroke="#e05a3a" stroke-width="1"/>
<path d="M132.6 68.2l2-1.4" stroke="#e8a838" stroke-width="0.8"/>
<rect x="135.4" y="68.8" width="6.4" height="2.2" fill="#ecc172"/>
<rect x="135.4" y="71.6" width="6.4" height="3.2" fill="#fff" stroke="#6f6f6f" stroke-width="0.8"/>
<path d="M170.7 69.5h3.6l-1.8 2.100z" fill="#4a4a4a"/>
</g>

<g id="fontgrp" fill="none" stroke="#a8a8a8" stroke-width="0.8">
<path d="M243.8 45h3l-1.5 1.8z" fill="#b0b0b0" stroke="none"/>
<path d="M269.4 45h3l-1.5 1.8z" fill="#b0b0b0" stroke="none"/>
<!-- grow / shrink carets -->
<path d="M285.4 43.6l1.3-1.5 1.3 1.5z" fill="#a8a8a8" stroke="none"/>
<path d="M299 42.4l1.3 1.5 1.3-1.5z" fill="#a8a8a8" stroke="none"/>
<!-- underline for U, strike for abc -->
<path d="M216 69.2h5.2" stroke="#9a9a9a" stroke-width="0.7"/>
<path d="M241.6 65.8h10.8" stroke="#9a9a9a" stroke-width="0.6"/>
<path d="M256.4 68.6h9.6" stroke="#9a9a9a" stroke-width="0.7"/>
<path d="M257.8 67.4l-1.5 1.2 1.5 1.2M264.6 67.4l1.5 1.2-1.5 1.2" stroke="#9a9a9a" stroke-width="0.7"/>
<path d="M268.8 64.9h2.8l-1.4 1.7z" fill="#b0b0b0" stroke="none"/>
<path d="M290.1 64.9h2.8l-1.4 1.7z" fill="#b0b0b0" stroke="none"/>
<path d="M318 64.9h2.8l-1.4 1.7z" fill="#b0b0b0" stroke="none"/>
<!-- clear formatting -->
<path d="M313.2 46.6l4.2-4.4 3.8 3.2-4.2 4.6z" fill="#bdbdbd" stroke="#a0a0a0" stroke-width="0.6"/>
<path d="M313 42l1.4 3.2M312.6 44.2h2.4" stroke="#a0a0a0" stroke-width="0.7"/>
<!-- launcher -->
<path d="M319.6 87.2v-3.8h3.8" stroke="#b0b0b0" stroke-width="0.7"/>
<path d="M321.2 85.2l2.4 2.4M323.8 85.8v1.9h-1.9" stroke="#a0a0a0" stroke-width="0.7"/>
</g>
<g id="paragrp" fill="none" stroke="#a8a8a8" stroke-width="0.8">
<!-- bullets -->
<path d="M334.4 41.7h5.6M334.4 45.6h5.6M334.4 49.4h5.6"/>
<path d="M332 41.7h1.3M332 45.6h1.3M332 49.4h1.3" stroke-width="1.2"/>
<path d="M345.3 45h2.8l-1.4 1.7z" fill="#b0b0b0" stroke="none"/>
<!-- numbering -->
<path d="M356.2 41.7h6.2M356.2 45.6h6.2M356.2 49.4h6.2"/>
<path d="M353.8 40.4v2.4M353.2 44.6h1.3v1h-1.3v1h1.3M353.2 48.3h1.3v2.2h-1.3M353.2 49.4h1.3" stroke-width="0.6"/>
<path d="M367.1 45h2.8l-1.4 1.7z" fill="#b0b0b0" stroke="none"/>
<!-- indent -->
<path d="M384.6 42.4h5.8M384.6 44.6h5.8M384.6 46.8h5.8M381 49h9.4"/>
<path d="M380.4 45.2h3.4M382 43.6l-1.7 1.6 1.7 1.6"/>
<path d="M398.8 42.4h5.8M398.8 44.6h5.8M398.8 46.8h5.8M395 49h9.6"/>
<path d="M394.4 45.2h3.4M396.4 43.6l1.7 1.6-1.7 1.6"/>
<!-- line spacing -->
<path d="M418.6 42.6h5M418.6 44.8h5M418.6 47h5M418.6 49.2h5"/>
<path d="M415.6 41.6v8.6M414.2 43.2l1.4-1.7 1.4 1.7M414.2 48.6l1.4 1.7 1.4-1.7"/>
<path d="M427 45h2.8l-1.4 1.7z" fill="#b0b0b0" stroke="none"/>
<!-- alignment -->
<path d="M332 62.6h8.6M332 64.6h6.4M332 66.5h8.6M332 68.5h6.4"/>
<path d="M345.9 62.6h8.8M347.1 64.6h6.4M345.9 66.5h8.8M347.1 68.5h6.4"/>
<path d="M359.9 62.6h8.8M362.3 64.6h6.4M359.9 66.5h8.8M362.3 68.5h6.4"/>
<path d="M373.9 62.6h8.8M373.9 64.6h8.8M373.9 66.5h8.8M373.9 68.5h8.8"/>
<!-- columns -->
<path d="M393.6 62.6h3.6M398.4 62.6h3.6M393.6 64.6h3.6M398.4 64.6h3.6M393.6 66.5h3.6M398.4 66.5h3.6M393.6 68.5h3.6M398.4 68.5h3.6"/>
<path d="M406.1 64.9h2.8l-1.4 1.7z" fill="#b0b0b0" stroke="none"/>
<!-- text direction -->
<path d="M436 36.6v8.8M438.6 36.6v8.8" stroke-width="0.7"/>
<path d="M435.2 44.6h1.6M437.8 44.6h1.6" stroke-width="0.9"/>
<path d="M441 45.4l1.8-7.4 1.8 7.4M441.6 42.8h2.4" stroke-width="0.7"/>
<path d="M441.4 38.6l1.4-1.8 1.4 1.8" stroke-width="0.6"/>
<path d="M495.1 40.3h2.8l-1.4 1.7z" fill="#b0b0b0" stroke="none"/>
<!-- align text -->
<path d="M437.4 51.6h-1.9v8.2h1.9M442.6 51.6h1.9v8.2h-1.9" stroke-width="0.8"/>
<path d="M437.6 54.4h4.8M437.6 56h4.8M437.6 57.6h4.8" stroke-width="0.6"/>
<path d="M440 51v2.6M439 52.6l1 1 1-1M440 60.4v-2.2M439 58.8l1-1 1 1" stroke-width="0.6"/>
<path d="M482.5 55h2.8l-1.4 1.7z" fill="#b0b0b0" stroke="none"/>
<!-- convert to smartart -->
<path d="M435.4 65.6h6l2 2.6h-6z" fill="#b8b8b8" stroke="#a0a0a0" stroke-width="0.5"/>
<rect x="438.6" y="68.8" width="6" height="5.6" fill="#fff" stroke="#a8a8a8" stroke-width="0.8"/>
<rect x="440" y="70.4" width="3.2" height="2.6" fill="#e6dfe8" stroke="none"/>
<path d="M435.6 69.6h2M436.6 69v3" stroke-width="0.6"/>
<path d="M516.6 69.6h2.8l-1.4 1.7z" fill="#b0b0b0" stroke="none"/>
<!-- launcher -->
<path d="M519.6 87.2v-3.8h3.8" stroke="#b0b0b0" stroke-width="0.7"/>
<path d="M521.2 85.2l2.4 2.4M523.8 85.8v1.9h-1.9" stroke="#a0a0a0" stroke-width="0.7"/>
</g>

<g id="shapes" fill="none" stroke="#606060" stroke-width="0.75">
<!-- gallery scroll column -->
<path d="M608.8 35.5v38M608.8 49h8.8M608.8 61.4h8.8" stroke="#c8c8c8" stroke-width="0.9"/>
<rect x="609.3" y="35.9" width="8" height="12.7" fill="#f6f6f6" stroke="none"/>
<path d="M611.8 43.2l1.4-1.6 1.4 1.6z" fill="#c4c4c4" stroke="none"/>
<path d="M611.6 54.6h3.6l-1.8 2.100z" fill="#4a4a4a" stroke="none"/>
<path d="M611.4 65.8h3.6" stroke="#777" stroke-width="0.8"/>
<path d="M611.6 67.4h3.2l-1.6 1.9z" fill="#666" stroke="none"/>
<!-- row 1 -->
<rect x="532.6" y="37.6" width="8.8" height="7.6" fill="#fff"/>
<path d="M533.2 39h7.6" stroke="#6a6a6a" stroke-width="0.5"/>
<path d="M534 41.6l0.9-2 0.9 2" stroke="#2f7fc4" stroke-width="0.7"/>
<path d="M536.6 40.6h3.6M536.6 42h3.6M534 43.4h6.2" stroke="#9a9a9a" stroke-width="0.5"/>
<path d="M546 37.8l8.6 8.4"/>
<path d="M558.6 37.8l8.6 8.4M567.4 43.6v2.8h-2.8"/>
<rect x="570.6" y="38.4" width="9.8" height="7"/>
<ellipse cx="588.2" cy="41.9" rx="4.8" ry="3.6"/>
<rect x="596.4" y="38.4" width="9.6" height="7" rx="1.6"/>
<!-- row 2 -->
<path d="M537.2 50.6l-3.8 7.8h7.6z"/>
<path d="M545.4 51.2h4.2v7h5"/>
<path d="M558 50.8h4.4v6.4h5M565.8 55.6l1.8 1.6-1.8 1.6"/>
<path d="M570.6 52.8h4.6v-2.4l4.8 4.2-4.8 4.2v-2.4h-4.6z"/>
<path d="M586.2 50.6h4v4h2.2l-4.2 4.2-4.2-4.2h2.2z"/>
<path d="M597 58.4v-6.2l1.6-1.4h5v2.2a1.6 1.6 0 0 0 1.8 1.8v2.2l-1.6 1.4z"/>
<!-- row 3 -->
<path d="M536.6 63c-2.2 1.2-1.6 2.8 0.4 3.200s2.200 2.600-0.200 2.800c1.200 0.600 1.400 1.600 0.800 2.400" stroke-width="0.9"/>
<path d="M536.200 70.800l1.600 0.800 0.400-1.800" stroke-width="0.9"/>
<path d="M546 63.800c5 0 8.400 2.800 8.800 7.400"/>
<path d="M558.600 71.200c1-9.600 4.600-9.600 5.600-3.600 0.600 3.400 1.600 4 3.400 3.800"/>
<path d="M576.200 63.400c-1.400 0-1.200 1-1.200 2 0 1.200-0.200 1.800-1 2 0.800 0.200 1 0.800 1 2 0 1-0.200 2 1.200 2"/>
<path d="M587.400 63.400c1.400 0 1.200 1 1.200 2 0 1.200 0.200 1.800 1 2-0.800 0.200-1 0.800-1 2 0 1 0.200 2-1.200 2"/>
<path d="M601.200 62.800l1.300 3h3.300l-2.600 2 1 3.200-3-1.900-3 1.900 1-3.200-2.600-2h3.300z"/>
</g>
<g id="arrange">
<rect x="628.200" y="45.200" width="5.900" height="5.700" fill="#efc572"/>
<rect x="634.100" y="39.600" width="6.100" height="6.200" fill="#efc572"/>
<rect x="625.500" y="37.300" width="7.400" height="7.200" fill="#fff" stroke="#6a6a6a" stroke-width="0.8"/>
<rect x="635.400" y="46.800" width="7.200" height="6.800" fill="#fff" stroke="#6a6a6a" stroke-width="0.8"/>
<path d="M632.900 71.800h3.600l-1.800 2.100z" fill="#4a4a4a"/>
<!-- quick styles -->
<rect x="654.800" y="37.400" width="16.200" height="16.600" rx="3.400" fill="#f1edf1" stroke="#cfcacf" stroke-width="0.9"/>
<path d="M660.500 55l7.300-8.400 4.600-5.800v6.400l-5 7.800z" fill="#c9c9c9"/>
<path d="M666.400 50.400l2.600-3.200 1.400 1.200-2.400 3.200z" fill="#9a9a9a"/>
<path d="M671.800 71.800h3l-1.500 1.800z" fill="#b0b0b0"/>
<!-- shape fill -->
<path d="M681.200 42.600l3.400-3.600 3.600 3-3.600 2.800z" fill="#fff" stroke="#a8a8a8" stroke-width="0.8"/>
<path d="M683.800 39.200v-2.400a1 1 0 0 1 2 0v2" fill="none" stroke="#a8a8a8" stroke-width="0.7"/>
<path d="M688.400 42.200c0.800 1 0.800 1.800 0 2.200" fill="none" stroke="#b8b8b8" stroke-width="0.8"/>
<rect x="679.200" y="43.800" width="9.400" height="1.800" fill="#d0d0d0"/>
<path d="M725.100 40.300h2.800l-1.400 1.700z" fill="#b0b0b0"/>
<!-- shape outline -->
<path d="M686 50.800h-6.400v6.600h6.400" fill="none" stroke="#a8a8a8" stroke-width="0.8"/>
<path d="M683 56.400l5.600-5.600" stroke="#a8a8a8" stroke-width="1.300"/>
<path d="M740.300 55h2.800l-1.400 1.700z" fill="#b0b0b0"/>
<!-- shape effects -->
<path d="M681.400 67h6.600l-1.600 4.600h-6.600z" fill="#e0e0e0" stroke="#a8a8a8" stroke-width="0.800"/>
<path d="M680.200 72.600h6.400l1.800-5" fill="none" stroke="#bdbdbd" stroke-width="1"/>
<path d="M737.500 69.600h2.800l-1.400 1.700z" fill="#b0b0b0"/>
<path d="M742.300 87.200v-3.800h3.800" fill="none" stroke="#b0b0b0" stroke-width="0.700"/>
<path d="M743.900 85.200l2.400 2.400M746.500 85.800v1.900h-1.900" fill="none" stroke="#a0a0a0" stroke-width="0.700"/>
</g>
<g id="editgrp">
<!-- find (binoculars) -->
<path d="M755.600 38.400h2.400v1.800h1.800v-1.800h2.400l1.400 5.800h-3.400v-1.600h-2.600v1.600h-3.400z" fill="#4a4a4a"/>
<rect x="754.400" y="41.200" width="3.600" height="3.400" rx="0.600" fill="#4a4a4a"/>
<rect x="760" y="41.200" width="3.600" height="3.400" rx="0.600" fill="#4a4a4a"/>
<path d="M756.400 36.600h1.600M760 36.600h1.600" stroke="#4a4a4a" stroke-width="1.200"/>
<!-- replace -->
<path d="M755.200 58.400c-1-1-1-2 0-3" fill="none" stroke="#2f7fc4" stroke-width="0.900"/>
<path d="M754.200 57.600l1 1.600 1-1.200z" fill="#2f7fc4"/>
<!-- select cursor -->
<path d="M756.600 65.800v7.200l1.800-1.600 1.400 3 1.200-0.600-1.400-2.800h2.400z" fill="#fff" stroke="#555" stroke-width="0.700"/>
<path d="M787.900 69.600h3.600l-1.800 2.100z" fill="#4a4a4a"/>
<path d="M798.700 54.400h3.600l-1.800 2.100z" fill="#4a4a4a"/>
</g>

<g id="statusicons" fill="none" stroke="#fff" stroke-width="0.900">
<!-- spell/accessibility icon -->
<path d="M62.400 477.800h3.600v6.400h-3.600z" stroke-width="0.700"/>
<path d="M66 478.400l1.200-0.600v7l-1.200-0.600" stroke-width="0.700"/>
<path d="M67.600 479.400l2.800 3.200M70.400 479.400l-2.800 3.200" stroke-width="0.800"/>
<!-- notes -->
<path d="M541.600 485.200h7M542.400 483.600h5.400M543 482h4.200" stroke="#f2c4b8" stroke-width="0.800"/>
<path d="M543.600 480.600l1.400-2.600 1.400 2.600z" fill="#f2c4b8" stroke="none"/>
<!-- comments -->
<path d="M586.800 477.500h7.600v5.300h-4.200l-1.600 2.300v-2.300h-1.800z" fill="#fff" stroke="none"/>
<!-- normal view -->
<rect x="655.300" y="477.200" width="9.300" height="7.800" fill="#fff" stroke="none"/>
<rect x="658.600" y="478.300" width="4.800" height="3.200" fill="#b83b1d" stroke="none"/>
<path d="M657.400 478.300v5.600M658.600 483.200h4.800" stroke="#b83b1d" stroke-width="0.700"/>
<!-- sorter -->
<rect x="679.600" y="477.200" width="3.900" height="3.300" fill="#fff" stroke="none"/>
<rect x="684.700" y="477.200" width="3.900" height="3.300" fill="#fff" stroke="none"/>
<rect x="679.600" y="481.700" width="3.900" height="3.300" fill="#fff" stroke="none"/>
<rect x="684.700" y="481.700" width="3.900" height="3.300" fill="#fff" stroke="none"/>
<!-- reading view -->
<path d="M703.600 477.600h3.600l0.400 0.500 0.400-0.500h3.600v6.200h-3.600l-0.400 0.600-0.400-0.600h-3.600z" fill="#f0b9aa" stroke="#f7d9d0" stroke-width="0.600"/>
<path d="M707.600 478.100v6.300" stroke="#d24726" stroke-width="0.600"/>
<!-- slideshow -->
<path d="M728 477.600h8.600" stroke-width="1"/>
<path d="M729 478.200v3.800h6.600v-3.800" stroke-width="0.800"/>
<path d="M732.300 482v2.400M730.400 484.800h3.800" stroke-width="0.800"/>
<!-- zoom -->
<path d="M748 481h3.400" stroke-width="1.200"/>
<path d="M754.200 481h64" stroke="#eda592" stroke-width="0.900"/>
<rect x="778" y="477.300" width="2.900" height="7.600" fill="#fff" stroke="none"/>
<path d="M786.300 479.200v3.600" stroke="#f3c1b3" stroke-width="0.800"/>
<path d="M820.500 481h5M823 478.500v5" stroke-width="1.200"/>
<!-- fit -->
<rect x="857.600" y="477.600" width="8" height="7.600" stroke-width="0.900"/>
<path d="M859.400 479.400l1.400 1.400M863.800 479.400l-1.400 1.400M859.400 483.400l1.400-1.400M863.800 483.400l-1.400-1.400" stroke-width="0.900"/>
<path d="M859 480.400v-1.400h1.400M864.200 480.400v-1.400h-1.400M859 482.400v1.400h1.400M864.200 482.400v1.400h-1.400" stroke-width="0.700"/>
</g>
<g id="scrollarrows" fill="#555">
<path d="M173.200 98l2.350-2.600 2.350 2.600z"/>
<path d="M173.200 466.600l2.350 2.600 2.350-2.600z"/>
<path d="M862.100 98l2.350-2.600 2.350 2.600z"/>
<path d="M862.100 430.600l2.350 2.600 2.350-2.600z"/>
<path d="M862.600 442.600l1.800-2 1.800 2zM862.600 445.200l1.800-2 1.800 2z"/>
<path d="M862.600 451.400l1.800 2 1.800-2zM862.600 454l1.800 2 1.800-2z"/>
</g>


<g id="labels">
<text x="315.8" y="10.6" font-size="8.2" fill="#fff" stroke="#fff" stroke-width="0.1" textLength="236.7" lengthAdjust="spacingAndGlyphs" style="white-space:pre">SlideUpLift.com Deck - Copy -  PowerPoint (Product Activation Failed)</text>
<text x="12.4" y="27.0" font-size="8.3" fill="#fff" stroke="#fff" stroke-width="0.12" textLength="12.9" lengthAdjust="spacingAndGlyphs">FILE</text>
<text x="48.8" y="27.0" font-size="8.3" fill="#d24726" stroke="#d24726" stroke-width="0.12" textLength="22.1" lengthAdjust="spacingAndGlyphs">HOME</text>
<text x="89.3" y="27.0" font-size="8.3" fill="#444" stroke="#444" stroke-width="0.12" textLength="22.7" lengthAdjust="spacingAndGlyphs">INSERT</text>
<text x="131.7" y="27.0" font-size="8.3" fill="#444" stroke="#444" stroke-width="0.12" textLength="25.0" lengthAdjust="spacingAndGlyphs">DESIGN</text>
<text x="175.7" y="27.0" font-size="8.3" fill="#444" stroke="#444" stroke-width="0.12" textLength="46.6" lengthAdjust="spacingAndGlyphs">TRANSITIONS</text>
<text x="240.7" y="27.0" font-size="8.3" fill="#444" stroke="#444" stroke-width="0.12" textLength="45.3" lengthAdjust="spacingAndGlyphs">ANIMATIONS</text>
<text x="305.0" y="27.0" font-size="8.3" fill="#444" stroke="#444" stroke-width="0.12" textLength="42.5" lengthAdjust="spacingAndGlyphs">SLIDE SHOW</text>
<text x="366.7" y="27.0" font-size="8.3" fill="#444" stroke="#444" stroke-width="0.12" textLength="25.0" lengthAdjust="spacingAndGlyphs">REVIEW</text>
<text x="410.3" y="27.0" font-size="8.3" fill="#444" stroke="#444" stroke-width="0.12" textLength="17.2" lengthAdjust="spacingAndGlyphs">VIEW</text>
<text x="445.8" y="27.0" font-size="8.3" fill="#444" stroke="#444" stroke-width="0.12" textLength="59.5" lengthAdjust="spacingAndGlyphs">STORYBOARDING</text>
<text x="43.7" y="43.5" font-size="8.0" fill="#444" stroke="#444" stroke-width="0.26" textLength="11.7" lengthAdjust="spacingAndGlyphs">Cut</text>
<text x="43.7" y="58.4" font-size="8.0" fill="#444" stroke="#444" stroke-width="0.26" textLength="17.1" lengthAdjust="spacingAndGlyphs">Copy</text>
<text x="43.7" y="73.2" font-size="8.0" fill="#444" stroke="#444" stroke-width="0.26" textLength="49.5" lengthAdjust="spacingAndGlyphs">Format Painter</text>
<text x="7.3" y="65.7" font-size="8.0" fill="#444" stroke="#444" stroke-width="0.26" textLength="17.4" lengthAdjust="spacingAndGlyphs">Paste</text>
<text x="28.9" y="87.7" font-size="7.9" fill="#6a6a6a" stroke="#6a6a6a" stroke-width="0.26" textLength="32.2" lengthAdjust="spacingAndGlyphs">Clipboard</text>
<text x="109.2" y="65.7" font-size="8.0" fill="#444" stroke="#444" stroke-width="0.26" textLength="14.7" lengthAdjust="spacingAndGlyphs">New</text>
<text x="105.8" y="75.6" font-size="8.0" fill="#444" stroke="#444" stroke-width="0.26" textLength="16.2" lengthAdjust="spacingAndGlyphs">Slide</text>
<text x="144.2" y="43.5" font-size="8.0" fill="#444" stroke="#444" stroke-width="0.26" textLength="22.4" lengthAdjust="spacingAndGlyphs">Layout</text>
<text x="144.2" y="58.4" font-size="8.0" fill="#444" stroke="#444" stroke-width="0.26" textLength="17.3" lengthAdjust="spacingAndGlyphs">Reset</text>
<text x="144.2" y="73.2" font-size="8.0" fill="#444" stroke="#444" stroke-width="0.26" textLength="24.1" lengthAdjust="spacingAndGlyphs">Section</text>
<text x="131.8" y="87.7" font-size="7.9" fill="#6a6a6a" stroke="#6a6a6a" stroke-width="0.26" textLength="18.3" lengthAdjust="spacingAndGlyphs">Slides</text>
<text x="252.9" y="48.8" font-size="7.9" fill="#a3a3a3" stroke="#a3a3a3" stroke-width="0.26" textLength="7.2" lengthAdjust="spacingAndGlyphs">18</text>
<text x="240.8" y="87.7" font-size="7.9" fill="#6a6a6a" stroke="#6a6a6a" stroke-width="0.26" textLength="15.2" lengthAdjust="spacingAndGlyphs">Font</text>
<text x="404.9" y="87.7" font-size="7.9" fill="#6a6a6a" stroke="#6a6a6a" stroke-width="0.26" textLength="33.4" lengthAdjust="spacingAndGlyphs">Paragraph</text>
<text x="447.7" y="43.5" font-size="8.0" fill="#a3a3a3" stroke="#a3a3a3" stroke-width="0.26" textLength="45.3" lengthAdjust="spacingAndGlyphs">Text Direction</text>
<text x="447.7" y="58.4" font-size="8.0" fill="#a3a3a3" stroke="#a3a3a3" stroke-width="0.26" textLength="32.3" lengthAdjust="spacingAndGlyphs">Align Text</text>
<text x="447.7" y="73.2" font-size="8.0" fill="#a3a3a3" stroke="#a3a3a3" stroke-width="0.26" textLength="66.6" lengthAdjust="spacingAndGlyphs">Convert to SmartArt</text>
<text x="621.2" y="65.7" font-size="8.0" fill="#444" stroke="#444" stroke-width="0.26" textLength="26.6" lengthAdjust="spacingAndGlyphs">Arrange</text>
<text x="653.7" y="65.7" font-size="8.0" fill="#a3a3a3" stroke="#a3a3a3" stroke-width="0.26" textLength="19.4" lengthAdjust="spacingAndGlyphs">Quick</text>
<text x="650.8" y="75.6" font-size="8.0" fill="#a3a3a3" stroke="#a3a3a3" stroke-width="0.26" textLength="18.8" lengthAdjust="spacingAndGlyphs">Styles</text>
<text x="691.2" y="43.5" font-size="8.0" fill="#a3a3a3" stroke="#a3a3a3" stroke-width="0.26" textLength="31.9" lengthAdjust="spacingAndGlyphs">Shape Fill</text>
<text x="691.2" y="58.4" font-size="8.0" fill="#a3a3a3" stroke="#a3a3a3" stroke-width="0.26" textLength="47.4" lengthAdjust="spacingAndGlyphs">Shape Outline</text>
<text x="691.2" y="73.2" font-size="8.0" fill="#a3a3a3" stroke="#a3a3a3" stroke-width="0.26" textLength="44.6" lengthAdjust="spacingAndGlyphs">Shape Effects</text>
<text x="619.5" y="87.7" font-size="7.9" fill="#6a6a6a" stroke="#6a6a6a" stroke-width="0.26" textLength="27.6" lengthAdjust="spacingAndGlyphs">Drawing</text>
<text x="766.6" y="43.5" font-size="8.0" fill="#444" stroke="#444" stroke-width="0.26" textLength="13.9" lengthAdjust="spacingAndGlyphs">Find</text>
<text x="766.6" y="58.4" font-size="8.0" fill="#444" stroke="#444" stroke-width="0.26" textLength="25.7" lengthAdjust="spacingAndGlyphs">Replace</text>
<text x="766.6" y="73.2" font-size="8.0" fill="#444" stroke="#444" stroke-width="0.26" textLength="19.2" lengthAdjust="spacingAndGlyphs">Select</text>
<text x="767.0" y="87.7" font-size="7.9" fill="#6a6a6a" stroke="#6a6a6a" stroke-width="0.26" textLength="23.4" lengthAdjust="spacingAndGlyphs">Editing</text>
<text x="188.2" y="67.9" font-size="7.8" fill="#9a9a9a" font-weight="bold" textLength="4.5" lengthAdjust="spacingAndGlyphs">B</text>
<text x="203.5" y="67.9" font-size="7.8" fill="#9a9a9a" stroke="#9a9a9a" stroke-width="0.26" font-style="italic" textLength="3.0" lengthAdjust="spacingAndGlyphs" font-family='"Liberation Serif", serif'>I</text>
<text x="216.3" y="67.9" font-size="7.8" fill="#9a9a9a" stroke="#9a9a9a" stroke-width="0.26" textLength="4.7" lengthAdjust="spacingAndGlyphs">U</text>
<text x="230.9" y="67.9" font-size="7.8" fill="#9a9a9a" stroke="#9a9a9a" stroke-width="0.26" textLength="4.7" lengthAdjust="spacingAndGlyphs">S</text>
<text x="241.9" y="67.9" font-size="6.6" fill="#9a9a9a" stroke="#9a9a9a" stroke-width="0.26" textLength="10.3" lengthAdjust="spacingAndGlyphs">abc</text>
<text x="256.5" y="66.0" font-size="6.2" fill="#9a9a9a" stroke="#9a9a9a" stroke-width="0.26" textLength="9.5" lengthAdjust="spacingAndGlyphs">AV</text>
<text x="277.0" y="67.9" font-size="7.8" fill="#9a9a9a" stroke="#9a9a9a" stroke-width="0.26" textLength="9.5" lengthAdjust="spacingAndGlyphs">Aa</text>
<text x="279.9" y="50.0" font-size="9.2" fill="#9a9a9a" stroke="#9a9a9a" stroke-width="0.26" textLength="6.1" lengthAdjust="spacingAndGlyphs">A</text>
<text x="294.3" y="50.0" font-size="7.8" fill="#9a9a9a" stroke="#9a9a9a" stroke-width="0.26" textLength="5.2" lengthAdjust="spacingAndGlyphs">A</text>
<text x="305.9" y="68.7" font-size="9.4" fill="#9a9a9a" stroke="#9a9a9a" stroke-width="0.26" textLength="6.3" lengthAdjust="spacingAndGlyphs">A</text>
<text x="254.2" y="204.3" font-size="10.7" fill="#111" stroke="#111" stroke-width="0.26" textLength="27.9" lengthAdjust="spacingAndGlyphs">Part 1</text>
<text x="406.9" y="205.2" font-size="8.2" fill="#dde1e8" stroke="#dde1e8" stroke-width="0.26" textLength="44.1" lengthAdjust="spacingAndGlyphs">Window Snip</text>
<text x="7.8" y="155.3" font-size="9.4" fill="#d9573a" textLength="4.8" lengthAdjust="spacingAndGlyphs">4</text>
<text x="7.9" y="247.2" font-size="10.6" fill="#4a4a4a" stroke="#4a4a4a" stroke-width="0.1" textLength="5.0" lengthAdjust="spacingAndGlyphs">5</text>
<text x="7.9" y="339.1" font-size="10.6" fill="#4a4a4a" stroke="#4a4a4a" stroke-width="0.1" textLength="5.0" lengthAdjust="spacingAndGlyphs">6</text>
<text x="7.9" y="430.5" font-size="10.6" fill="#4a4a4a" stroke="#4a4a4a" stroke-width="0.1" textLength="5.0" lengthAdjust="spacingAndGlyphs">7</text>
<text x="29.4" y="171.9" font-size="2.9" fill="#777" textLength="6.6" lengthAdjust="spacingAndGlyphs">Part 1</text>
<text x="29.4" y="263.6" font-size="2.9" fill="#777" textLength="6.6" lengthAdjust="spacingAndGlyphs">Part 2</text>
<text x="29.4" y="355.1" font-size="2.9" fill="#777" textLength="6.6" lengthAdjust="spacingAndGlyphs">Part 3</text>
<text x="5.5" y="483.3" font-size="7.9" fill="#fff" stroke="#fff" stroke-width="0.12" textLength="43.8" lengthAdjust="spacingAndGlyphs">SLIDE 4 OF 14</text>
<text x="551.9" y="483.3" font-size="7.9" fill="#fff" stroke="#fff" stroke-width="0.12" textLength="21.1" lengthAdjust="spacingAndGlyphs">NOTES</text>
<text x="597.0" y="483.3" font-size="7.9" fill="#fff" stroke="#fff" stroke-width="0.12" textLength="38.5" lengthAdjust="spacingAndGlyphs">COMMENTS</text>
<text x="835.8" y="483.3" font-size="7.9" fill="#fff" stroke="#fff" stroke-width="0.12" textLength="13.2" lengthAdjust="spacingAndGlyphs">80%</text>
<text x="784.1" y="10.0" font-size="8.4" fill="#555" stroke="#555" stroke-width="0.55" textLength="4.8" lengthAdjust="spacingAndGlyphs">?</text>
<text x="754.4" y="55.6" font-size="6.4" fill="#555" stroke="#555" stroke-width="0.1" textLength="6.6" lengthAdjust="spacingAndGlyphs">ab</text>
<text x="757.2" y="59.9" font-size="6.6" fill="#2f7fc4" stroke="#2f7fc4" stroke-width="0.3" textLength="6.8" lengthAdjust="spacingAndGlyphs">ac</text>
<text x="61.0" y="118.5" font-size="2.9" fill="#fff" font-weight="bold" textLength="10.4" lengthAdjust="spacingAndGlyphs">Lack of</text>
<text x="71.9" y="118.5" font-size="2.9" fill="#fff" font-weight="bold" textLength="6.8" lengthAdjust="spacingAndGlyphs">Sleep</text>
<text x="59.6" y="121.6" font-size="1.9" fill="#e8f8ff" textLength="19.8" lengthAdjust="spacingAndGlyphs">Doesn't mean it can't</text>
<text x="57.2" y="123.7" font-size="1.9" fill="#e8f8ff" textLength="24.6" lengthAdjust="spacingAndGlyphs">prevent sickness. Study can give</text>
<text x="64.0" y="125.7" font-size="1.9" fill="#e8f8ff" textLength="11.4" lengthAdjust="spacingAndGlyphs">to slow things</text>
<text x="99.6" y="96.0" font-size="2.9" fill="#fff" font-weight="bold" textLength="8.4" lengthAdjust="spacingAndGlyphs">Improve</text>
<text x="108.6" y="96.0" font-size="2.9" fill="#fff" font-weight="bold" textLength="5.6" lengthAdjust="spacingAndGlyphs">time</text>
<text x="91.6" y="99.0" font-size="1.9" fill="#e8f8ff" textLength="25.4" lengthAdjust="spacingAndGlyphs">Work on tasks you get in priority order</text>
<text x="92.6" y="101.3" font-size="1.9" fill="#e8f8ff" textLength="23.4" lengthAdjust="spacingAndGlyphs">where higher tasks are completed</text>
<text x="96.4" y="103.5" font-size="1.9" fill="#e8f8ff" textLength="15.2" lengthAdjust="spacingAndGlyphs">using block schedules</text>
<text x="129.6" y="118.5" font-size="2.9" fill="#fff" font-weight="bold" textLength="13.0" lengthAdjust="spacingAndGlyphs">Too much</text>
<text x="143.6" y="118.5" font-size="2.9" fill="#fff" font-weight="bold" textLength="7.0" lengthAdjust="spacingAndGlyphs">time</text>
<text x="134.6" y="122.2" font-size="2.9" fill="#fff" font-weight="bold" textLength="10.0" lengthAdjust="spacingAndGlyphs">needed</text>
<text x="126.4" y="124.8" font-size="1.9" fill="#e8f8ff" textLength="26.2" lengthAdjust="spacingAndGlyphs">Overanalyzing does not fulfil the</text>
<text x="128.8" y="127.2" font-size="1.9" fill="#e8f8ff" textLength="22.0" lengthAdjust="spacingAndGlyphs">procrastinating is only that to</text>
<text x="134.6" y="129.2" font-size="1.9" fill="#e8f8ff" textLength="10.0" lengthAdjust="spacingAndGlyphs">start off late</text>
</g>
</svg>
</body>
</html>
